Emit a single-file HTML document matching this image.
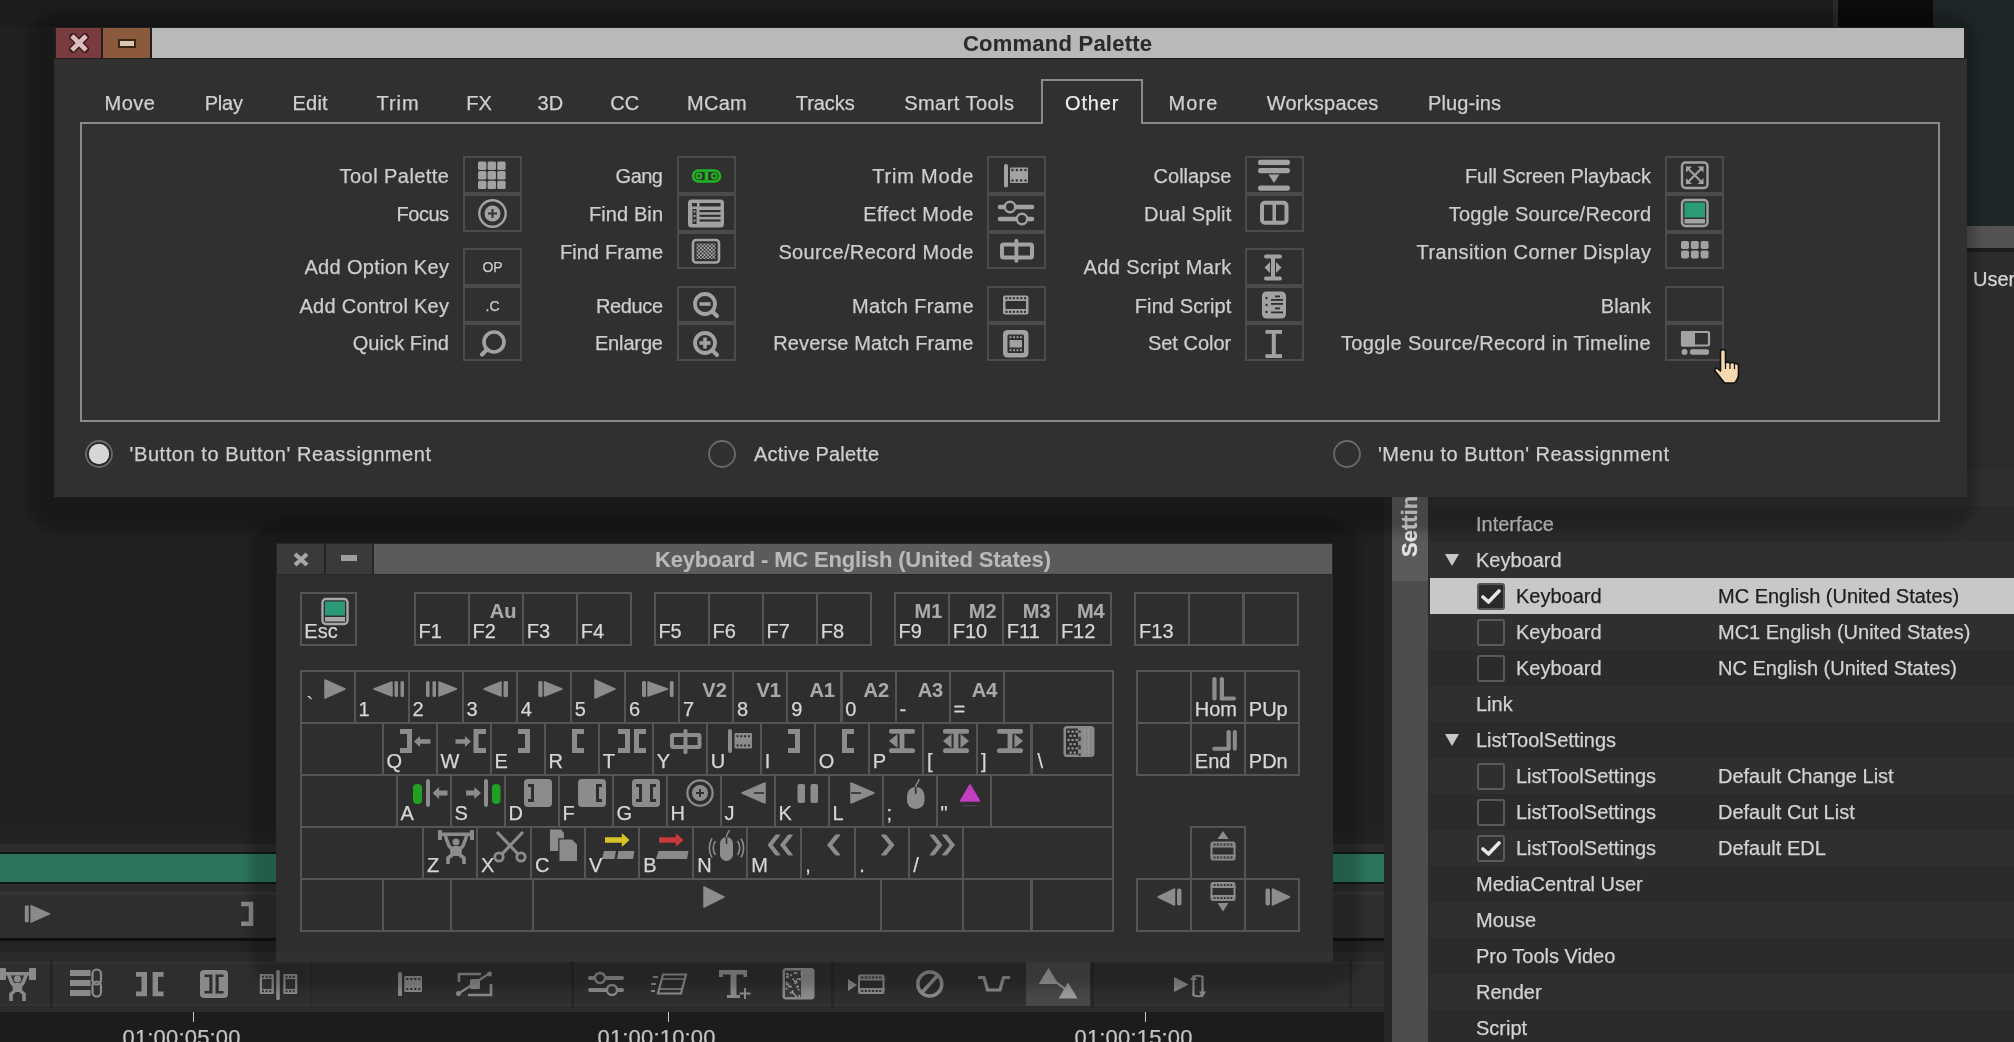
<!DOCTYPE html><html><head><meta charset="utf-8"><style>
html,body{margin:0;padding:0;width:2014px;height:1042px;overflow:hidden;background:#202020;}
.r{position:absolute;display:block}
.t{position:absolute;white-space:nowrap;line-height:1;font-family:"Liberation Sans",sans-serif;-webkit-text-stroke:0.25px currentColor}
#root{position:absolute;left:0;top:0;width:2014px;height:1042px;overflow:hidden;will-change:transform}
</style></head><body><div id="root">
<div class="r" style="left:0px;top:0px;width:2014px;height:1042px;background:#212121;"></div>
<div class="r" style="left:0px;top:0px;width:1833px;height:27px;background:#1c1c1c;"></div>
<div class="r" style="left:1833px;top:0px;width:5px;height:27px;background:#2a2a2a;"></div>
<div class="r" style="left:1838px;top:0px;width:95px;height:27px;background:#0c0c0c;"></div>
<div class="r" style="left:1933px;top:0px;width:81px;height:226px;background:#1f2629;"></div>
<div class="r" style="left:1966px;top:226px;width:48px;height:22px;background:#535353;"></div>
<div class="r" style="left:1966px;top:248px;width:48px;height:4px;background:#1c1c1c;"></div>
<div class="r" style="left:1966px;top:252px;width:48px;height:250px;background:#2c2c2c;"></div>
<div class="t" style="left:1973.00px;top:269.04px;font-size:20px;color:#d6d6d6;">User</div>
<div class="r" style="left:0px;top:830px;width:1384px;height:14px;background:#232323;"></div>
<div class="r" style="left:0px;top:844px;width:1384px;height:8px;background:#2e2c2d;"></div>
<div class="r" style="left:0px;top:851.5px;width:1384px;height:2.5px;background:#0f1a16;"></div>
<div class="r" style="left:0px;top:854px;width:1384px;height:28px;background:#2c745e;"></div>
<div class="r" style="left:0px;top:882px;width:1384px;height:2px;background:#0f1a16;"></div>
<div class="r" style="left:0px;top:884px;width:1384px;height:8px;background:#2e2c2d;"></div>
<div class="r" style="left:0px;top:892px;width:1384px;height:3px;background:#353535;"></div>
<div class="r" style="left:0px;top:895px;width:1384px;height:43px;background:#2e2e2e;"></div>
<div class="r" style="left:0px;top:938px;width:1384px;height:2.5px;background:#0e0e0e;"></div>
<div class="r" style="left:0px;top:940.5px;width:1384px;height:12px;background:#242424;"></div>
<svg class="r" style="left:20px;top:900px;" width="40" height="30" viewBox="0 0 40 30"><rect x="4.8" y="5.6" width="4" height="16.6" rx="1" fill="#8a8a8a"/><path d="M11 5.6 L29.7 13.9 L11 22.2 Z" fill="#8a8a8a" stroke="#8a8a8a" stroke-width="1.2" stroke-linejoin="round"/></svg>
<svg class="r" style="left:236px;top:898px;" width="22" height="32" viewBox="0 0 22 32"><path d="M5.2 6 H15 V25.8 H5.2" fill="none" stroke="#8a8a8a" stroke-width="4.5"/></svg>
<div class="r" style="left:0px;top:952px;width:1384px;height:60px;background:#2b2b2b;"></div>
<div class="r" style="left:0px;top:962px;width:1384px;height:44px;background:#2e2e2e;"></div>
<div class="r" style="left:0px;top:962px;width:1384px;height:1.5px;background:#333333;"></div>
<div class="r" style="left:0px;top:1004px;width:1384px;height:1.5px;background:#333333;"></div>
<div class="r" style="left:50px;top:960px;width:3px;height:48px;background:#262626;"></div>
<div class="r" style="left:571px;top:960px;width:3px;height:48px;background:#262626;"></div>
<div class="r" style="left:831px;top:960px;width:3px;height:48px;background:#262626;"></div>
<div class="r" style="left:1091px;top:960px;width:3px;height:48px;background:#262626;"></div>
<div class="r" style="left:1349px;top:960px;width:3px;height:48px;background:#262626;"></div>
<div class="r" style="left:310px;top:962px;width:2px;height:44px;background:#2a2a2a;"></div>
<div class="r" style="left:1026px;top:962px;width:64px;height:44px;background:#474747;"></div>
<svg class="r" style="left:0;top:0" width="1384" height="1042" viewBox="0 0 1384 1042"><rect x="-2" y="968" width="8" height="12" rx="1" fill="#8a8a8a"/><rect x="29" y="968" width="7" height="12" rx="1" fill="#8a8a8a"/><rect x="3" y="972" width="28" height="3.5" fill="#8a8a8a"/><circle cx="17.5" cy="979" r="3.6" fill="#8a8a8a"/><path d="M8 973 L12 983 L14.5 986 V991 L11 994 V1001 M27 973 L23 983 L20.5 986 V991 L24 994 V1001" fill="none" stroke="#8a8a8a" stroke-width="3.6" stroke-linejoin="round"/><rect x="13" y="983" width="9" height="9" rx="2.5" fill="#8a8a8a"/><rect x="70" y="970" width="20.5" height="6" fill="#8a8a8a"/><rect x="70" y="980" width="20.5" height="6" fill="#8a8a8a"/><rect x="70" y="990" width="20.5" height="6" fill="#8a8a8a"/><rect x="92.5" y="969.5" width="8.5" height="15" rx="4.2" fill="none" stroke="#8a8a8a" stroke-width="2.2"/><rect x="92.5" y="981.5" width="8.5" height="15" rx="4.2" fill="none" stroke="#8a8a8a" stroke-width="2.2"/><path d="M136 972 H147 V996.3 H136 V991.5 H141.5 V976.8 H136 Z" fill="#8a8a8a"/><path d="M163.6 972 H152.6 V996.3 H163.6 V991.5 H158 V976.8 H163.6 Z" fill="#8a8a8a"/><rect x="200" y="970" width="28" height="28" rx="4" fill="#8a8a8a"/><path d="M204.5 974.5 H212.5 V993.5 H204.5 V991 H209.3 V977 H204.5 Z M223.5 974.5 H215.5 V993.5 H223.5 V991 H218.7 V977 H223.5 Z" fill="#2e2e2e"/><rect x="259.8" y="974" width="14" height="20" rx="1" fill="#8a8a8a"/><rect x="262.0" y="979" width="9.6" height="10" fill="#333"/><rect x="262.0" y="975.8" width="2" height="2" fill="#333"/><rect x="262.0" y="990.2" width="2" height="2" fill="#333"/><rect x="265.6" y="975.8" width="2" height="2" fill="#333"/><rect x="265.6" y="990.2" width="2" height="2" fill="#333"/><rect x="269.2" y="975.8" width="2" height="2" fill="#333"/><rect x="269.2" y="990.2" width="2" height="2" fill="#333"/><rect x="283.3" y="974" width="14" height="20" rx="1" fill="#8a8a8a"/><rect x="285.5" y="979" width="9.6" height="10" fill="#333"/><rect x="285.5" y="975.8" width="2" height="2" fill="#333"/><rect x="285.5" y="990.2" width="2" height="2" fill="#333"/><rect x="289.1" y="975.8" width="2" height="2" fill="#333"/><rect x="289.1" y="990.2" width="2" height="2" fill="#333"/><rect x="292.7" y="975.8" width="2" height="2" fill="#333"/><rect x="292.7" y="990.2" width="2" height="2" fill="#333"/><rect x="276.2" y="970" width="3.6" height="30" rx="1.5" fill="#8a8a8a"/><rect x="398" y="972" width="4" height="24" rx="1.5" fill="#8a8a8a"/><rect x="404.3" y="976" width="17.7" height="16" rx="1" fill="#8a8a8a"/><rect x="406.3" y="978" width="2" height="2" fill="#2e2e2e"/><rect x="406.3" y="988" width="2" height="2" fill="#2e2e2e"/><rect x="410.3" y="978" width="2" height="2" fill="#2e2e2e"/><rect x="410.3" y="988" width="2" height="2" fill="#2e2e2e"/><rect x="414.3" y="978" width="2" height="2" fill="#2e2e2e"/><rect x="414.3" y="988" width="2" height="2" fill="#2e2e2e"/><rect x="418.3" y="978" width="2" height="2" fill="#2e2e2e"/><rect x="418.3" y="988" width="2" height="2" fill="#2e2e2e"/><path d="M459 982 V974 H481 M491 984 V995 H468" fill="none" stroke="#8a8a8a" stroke-width="2.6"/><path d="M458 994 L490 973" stroke="#8a8a8a" stroke-width="2.2"/><rect x="470" y="979" width="10" height="10" rx="1.5" fill="#8a8a8a"/><circle cx="458.5" cy="993.5" r="2.5" fill="#8a8a8a"/><circle cx="489.5" cy="974" r="2.5" fill="#8a8a8a"/><path d="M590 978 H622 M590 990 H622" stroke="#8a8a8a" stroke-width="4" stroke-linecap="round"/><circle cx="600" cy="978" r="5" fill="#2e2e2e" stroke="#8a8a8a" stroke-width="2.4"/><circle cx="612" cy="990" r="5" fill="#2e2e2e" stroke="#8a8a8a" stroke-width="2.4"/><path d="M663 974.5 H686 L681 993.5 H658 Z" fill="none" stroke="#8a8a8a" stroke-width="2.2"/><path d="M662 979 H685 M659 989 H682" stroke="#8a8a8a" stroke-width="1.6"/><path d="M653 977 H658 M651 984 H656 M651 991 H655" stroke="#8a8a8a" stroke-width="2"/><path d="M719 970 H747 V977 H743.5 V974.5 H736.5 V995 H740 V998 H727 V995 H730.5 V974.5 H723 V977 H719 Z" fill="#8a8a8a"/><path d="M745 988 V999 M739.5 993.5 H750.5" stroke="#8a8a8a" stroke-width="2"/><rect x="782.5" y="968" width="32" height="31.5" rx="3.5" fill="#8a8a8a"/><rect x="785" y="970.5" width="16" height="26.5" fill="#3a3a3a"/><rect x="790.2" y="974.4" width="1.8" height="1.8" fill="#a0a0a0"/><rect x="795.4" y="972.4" width="1.8" height="1.8" fill="#a0a0a0"/><rect x="793.6" y="980.0" width="1.8" height="1.8" fill="#a0a0a0"/><rect x="785.9" y="983.7" width="1.8" height="1.8" fill="#a0a0a0"/><rect x="785.6" y="981.8" width="1.8" height="1.8" fill="#a0a0a0"/><rect x="786.1" y="972.9" width="1.8" height="1.8" fill="#a0a0a0"/><rect x="791.8" y="992.0" width="1.8" height="1.8" fill="#a0a0a0"/><rect x="787.0" y="976.3" width="1.8" height="1.8" fill="#a0a0a0"/><rect x="795.0" y="995.1" width="1.8" height="1.8" fill="#a0a0a0"/><rect x="794.2" y="980.8" width="1.8" height="1.8" fill="#a0a0a0"/><rect x="800.6" y="971.7" width="1.8" height="1.8" fill="#a0a0a0"/><rect x="798.7" y="978.0" width="1.8" height="1.8" fill="#a0a0a0"/><rect x="787.3" y="973.6" width="1.8" height="1.8" fill="#a0a0a0"/><rect x="789.9" y="991.7" width="1.8" height="1.8" fill="#a0a0a0"/><rect x="787.9" y="985.6" width="1.8" height="1.8" fill="#a0a0a0"/><rect x="795.2" y="980.2" width="1.8" height="1.8" fill="#a0a0a0"/><rect x="793.8" y="972.1" width="1.8" height="1.8" fill="#a0a0a0"/><rect x="786.0" y="975.9" width="1.8" height="1.8" fill="#a0a0a0"/><rect x="795.9" y="981.6" width="1.8" height="1.8" fill="#a0a0a0"/><rect x="790.0" y="985.7" width="1.8" height="1.8" fill="#a0a0a0"/><rect x="792.3" y="978.3" width="1.8" height="1.8" fill="#a0a0a0"/><rect x="797.7" y="988.7" width="1.8" height="1.8" fill="#a0a0a0"/><rect x="788.9" y="985.4" width="1.8" height="1.8" fill="#a0a0a0"/><rect x="793.4" y="993.3" width="1.8" height="1.8" fill="#a0a0a0"/><rect x="796.7" y="978.0" width="1.8" height="1.8" fill="#a0a0a0"/><rect x="800.7" y="973.6" width="1.8" height="1.8" fill="#a0a0a0"/><rect x="791.7" y="990.2" width="1.8" height="1.8" fill="#a0a0a0"/><rect x="787.4" y="983.2" width="1.8" height="1.8" fill="#a0a0a0"/><rect x="785.6" y="987.9" width="1.8" height="1.8" fill="#a0a0a0"/><rect x="797.2" y="985.4" width="1.8" height="1.8" fill="#a0a0a0"/><rect x="799.0" y="978.7" width="1.8" height="1.8" fill="#a0a0a0"/><rect x="796.1" y="986.0" width="1.8" height="1.8" fill="#a0a0a0"/><rect x="794.3" y="982.4" width="1.8" height="1.8" fill="#a0a0a0"/><rect x="798.4" y="995.1" width="1.8" height="1.8" fill="#a0a0a0"/><path d="M848 979 L857 985 L848 991 Z" fill="#8a8a8a"/><rect x="859" y="975.5" width="24.5" height="17.5" rx="1" fill="none" stroke="#8a8a8a" stroke-width="2"/><path d="M858 979.5 H884.5 M858 989 H884.5" stroke="#8a8a8a" stroke-width="2"/><rect x="859.60" y="976.6" width="1.8" height="1.8" fill="#8a8a8a"/><rect x="859.60" y="990.1" width="1.8" height="1.8" fill="#8a8a8a"/><rect x="863.18" y="976.6" width="1.8" height="1.8" fill="#8a8a8a"/><rect x="863.18" y="990.1" width="1.8" height="1.8" fill="#8a8a8a"/><rect x="866.77" y="976.6" width="1.8" height="1.8" fill="#8a8a8a"/><rect x="866.77" y="990.1" width="1.8" height="1.8" fill="#8a8a8a"/><rect x="870.35" y="976.6" width="1.8" height="1.8" fill="#8a8a8a"/><rect x="870.35" y="990.1" width="1.8" height="1.8" fill="#8a8a8a"/><rect x="873.93" y="976.6" width="1.8" height="1.8" fill="#8a8a8a"/><rect x="873.93" y="990.1" width="1.8" height="1.8" fill="#8a8a8a"/><rect x="877.52" y="976.6" width="1.8" height="1.8" fill="#8a8a8a"/><rect x="877.52" y="990.1" width="1.8" height="1.8" fill="#8a8a8a"/><rect x="881.10" y="976.6" width="1.8" height="1.8" fill="#8a8a8a"/><rect x="881.10" y="990.1" width="1.8" height="1.8" fill="#8a8a8a"/><circle cx="929.8" cy="984" r="12" fill="none" stroke="#8a8a8a" stroke-width="3.5"/><path d="M922 992.5 L937.5 975.5" stroke="#8a8a8a" stroke-width="3.5"/><path d="M978 977.5 H984 L987.5 990 H1000 L1003.5 977.5 H1010" fill="none" stroke="#8a8a8a" stroke-width="3.2" stroke-linejoin="round"/><path d="M1048.5 969 L1057.3 983.5 L1039.7 983.5 Z M1068 983.5 L1076.7 998 L1059.6 998 Z" fill="#9a9a9a" stroke="#9a9a9a" stroke-width="1.2" stroke-linejoin="round"/><path d="M1052 979 L1065 989" stroke="#9a9a9a" stroke-width="2"/><path d="M1174 977 L1188.6 984.5 L1174 992 Z" fill="#8a8a8a"/><path d="M1193.5 996 V978 M1202.5 976 V994" stroke="#8a8a8a" stroke-width="2.2"/><path d="M1190 980 L1193.5 974.5 L1197 980 Z M1199 991.5 L1202.5 997.5 L1206 991.5 Z" fill="#8a8a8a"/><path d="M1193.5 978 C1193.5 975 1202.5 975 1202.5 978 M1193.5 994 C1193.5 997 1202.5 997 1202.5 994" fill="none" stroke="#8a8a8a" stroke-width="2"/></svg>
<div class="r" style="left:0px;top:1011.5px;width:1384px;height:31px;background:#1c1c1c;"></div>
<div class="r" style="left:192.5px;top:1012px;width:1.8px;height:9.5px;background:#c8c8c8;"></div>
<div class="t" style="left:122.50px;top:1026.84px;font-size:22px;color:#c2c2c2;letter-spacing:0.178px;">01:00:05:00</div>
<div class="r" style="left:667.5px;top:1012px;width:1.8px;height:9.5px;background:#c8c8c8;"></div>
<div class="t" style="left:597.50px;top:1026.84px;font-size:22px;color:#c2c2c2;letter-spacing:0.178px;">01:00:10:00</div>
<div class="r" style="left:1144.5px;top:1012px;width:1.8px;height:9.5px;background:#c8c8c8;"></div>
<div class="t" style="left:1074.50px;top:1026.84px;font-size:22px;color:#c2c2c2;letter-spacing:0.178px;">01:00:15:00</div>
<div class="r" style="left:1384px;top:497px;width:8px;height:545px;background:#262626;"></div>
<div class="r" style="left:1392px;top:490px;width:36px;height:552px;background:#4d4d4d;"></div>
<div class="r" style="left:1392px;top:490px;width:36px;height:91px;background:#5a5a5a;"></div>
<div class="t" style="left:1392px;top:497px;width:36px;height:62px;overflow:hidden"><div style="position:absolute;left:0px;top:0px;width:62px;height:36px;transform-origin:0 0;transform:translate(0px,62px) rotate(-90deg);font:bold 22px 'Liberation Sans';color:#e4e4e4;line-height:36px;text-indent:2px">Settings</div></div>
<div class="r" style="left:1428px;top:490px;width:586px;height:552px;background:#2d2d2d;"></div>
<div class="r" style="left:1428px;top:470px;width:586px;height:36px;background:#2f2f2f;"></div>
<div class="r" style="left:1430px;top:506px;width:584px;height:36px;background:#2b2b2b;"></div>
<div class="t" style="left:1476.00px;top:514.04px;font-size:20px;color:#d2d2d2;">Interface</div>
<div class="r" style="left:1430px;top:542px;width:584px;height:36px;background:#2f2f2f;"></div>
<div class="t" style="left:1476.00px;top:550.04px;font-size:20px;color:#d2d2d2;">Keyboard</div>
<svg class="r" style="left:1444px;top:553px;" width="16" height="14" viewBox="0 0 16 14"><path d="M1 1 L15 1 L8 13 Z" fill="#c8c8c8"/></svg>
<div class="r" style="left:1430px;top:578px;width:584px;height:36px;background:#c8c8c8;"></div>
<div class="r" style="left:1477px;top:583px;width:28px;height:27px;box-sizing:border-box;border:2px solid #555555;background:#2a2a2a;border-radius:3px;"></div>
<svg class="r" style="left:1481px;top:588px;" width="20" height="17" viewBox="0 0 20 17"><path d="M2 9 L7.5 14 L18 3" fill="none" stroke="#e6e6e6" stroke-width="3.6" stroke-linejoin="round" stroke-linecap="round"/></svg>
<div class="t" style="left:1516.00px;top:586.04px;font-size:20px;color:#1e1e1e;">Keyboard</div>
<div class="t" style="left:1718.00px;top:586.04px;font-size:20px;color:#1e1e1e;">MC English (United States)</div>
<div class="r" style="left:1430px;top:614px;width:584px;height:36px;background:#2f2f2f;"></div>
<div class="r" style="left:1477px;top:619px;width:28px;height:27px;box-sizing:border-box;border:2px solid #5a5a5a;border-radius:3px;"></div>
<div class="t" style="left:1516.00px;top:622.04px;font-size:20px;color:#d2d2d2;">Keyboard</div>
<div class="t" style="left:1718.00px;top:622.04px;font-size:20px;color:#d2d2d2;">MC1 English (United States)</div>
<div class="r" style="left:1430px;top:650px;width:584px;height:36px;background:#2b2b2b;"></div>
<div class="r" style="left:1477px;top:655px;width:28px;height:27px;box-sizing:border-box;border:2px solid #5a5a5a;border-radius:3px;"></div>
<div class="t" style="left:1516.00px;top:658.04px;font-size:20px;color:#d2d2d2;">Keyboard</div>
<div class="t" style="left:1718.00px;top:658.04px;font-size:20px;color:#d2d2d2;">NC English (United States)</div>
<div class="r" style="left:1430px;top:686px;width:584px;height:36px;background:#2f2f2f;"></div>
<div class="t" style="left:1476.00px;top:694.04px;font-size:20px;color:#d2d2d2;">Link</div>
<div class="r" style="left:1430px;top:722px;width:584px;height:36px;background:#2b2b2b;"></div>
<div class="t" style="left:1476.00px;top:730.04px;font-size:20px;color:#d2d2d2;">ListToolSettings</div>
<svg class="r" style="left:1444px;top:733px;" width="16" height="14" viewBox="0 0 16 14"><path d="M1 1 L15 1 L8 13 Z" fill="#c8c8c8"/></svg>
<div class="r" style="left:1430px;top:758px;width:584px;height:36px;background:#2f2f2f;"></div>
<div class="r" style="left:1477px;top:763px;width:28px;height:27px;box-sizing:border-box;border:2px solid #5a5a5a;border-radius:3px;"></div>
<div class="t" style="left:1516.00px;top:766.04px;font-size:20px;color:#d2d2d2;">ListToolSettings</div>
<div class="t" style="left:1718.00px;top:766.04px;font-size:20px;color:#d2d2d2;">Default Change List</div>
<div class="r" style="left:1430px;top:794px;width:584px;height:36px;background:#2b2b2b;"></div>
<div class="r" style="left:1477px;top:799px;width:28px;height:27px;box-sizing:border-box;border:2px solid #5a5a5a;border-radius:3px;"></div>
<div class="t" style="left:1516.00px;top:802.04px;font-size:20px;color:#d2d2d2;">ListToolSettings</div>
<div class="t" style="left:1718.00px;top:802.04px;font-size:20px;color:#d2d2d2;">Default Cut List</div>
<div class="r" style="left:1430px;top:830px;width:584px;height:36px;background:#2f2f2f;"></div>
<div class="r" style="left:1477px;top:835px;width:28px;height:27px;box-sizing:border-box;border:2px solid #5a5a5a;border-radius:3px;"></div>
<svg class="r" style="left:1481px;top:840px;" width="20" height="17" viewBox="0 0 20 17"><path d="M2 9 L7.5 14 L18 3" fill="none" stroke="#e6e6e6" stroke-width="3.6" stroke-linejoin="round" stroke-linecap="round"/></svg>
<div class="t" style="left:1516.00px;top:838.04px;font-size:20px;color:#d2d2d2;">ListToolSettings</div>
<div class="t" style="left:1718.00px;top:838.04px;font-size:20px;color:#d2d2d2;">Default EDL</div>
<div class="r" style="left:1430px;top:866px;width:584px;height:36px;background:#2b2b2b;"></div>
<div class="t" style="left:1476.00px;top:874.04px;font-size:20px;color:#d2d2d2;">MediaCentral User</div>
<div class="r" style="left:1430px;top:902px;width:584px;height:36px;background:#2f2f2f;"></div>
<div class="t" style="left:1476.00px;top:910.04px;font-size:20px;color:#d2d2d2;">Mouse</div>
<div class="r" style="left:1430px;top:938px;width:584px;height:36px;background:#2b2b2b;"></div>
<div class="t" style="left:1476.00px;top:946.04px;font-size:20px;color:#d2d2d2;">Pro Tools Video</div>
<div class="r" style="left:1430px;top:974px;width:584px;height:36px;background:#2f2f2f;"></div>
<div class="t" style="left:1476.00px;top:982.04px;font-size:20px;color:#d2d2d2;">Render</div>
<div class="r" style="left:1430px;top:1010px;width:584px;height:36px;background:#2b2b2b;"></div>
<div class="t" style="left:1476.00px;top:1018.04px;font-size:20px;color:#d2d2d2;">Script</div>
<div class="r" style="left:26px;top:12px;width:1950px;height:520px;background:rgba(0,0,0,0.22);border-radius:34px;filter:blur(5px);"></div>
<div class="r" style="left:54px;top:27px;width:1913px;height:470px;background:#303030;"></div>
<div class="r" style="left:54px;top:27px;width:1913px;height:32px;background:#1f1f1f;"></div>
<div class="r" style="left:56px;top:28px;width:45px;height:30px;background:#7a3b3e;"></div>
<div class="r" style="left:103px;top:28px;width:47px;height:30px;background:#8b5a3c;"></div>
<div class="r" style="left:152px;top:28px;width:1812px;height:30px;background:#b9b9b9;"></div>
<svg class="r" style="left:69px;top:33px;" width="20" height="20" viewBox="0 0 20 20"><path d="M4 4 L16 16 M16 4 L4 16" stroke="#3a1c1e" stroke-width="7.5" stroke-linecap="square"/><path d="M4.5 4.5 L15.5 15.5 M15.5 4.5 L4.5 15.5" stroke="#dcbcbc" stroke-width="4.6" stroke-linecap="square"/></svg>
<svg class="r" style="left:117px;top:38px;" width="20" height="11" viewBox="0 0 20 11"><rect x="1" y="1" width="18" height="9" fill="#3a2414"/><rect x="3" y="3" width="14" height="5" fill="#dcc6ae"/></svg>
<div class="t" style="left:963.00px;top:32.84px;font-size:22px;color:#2b2b2b;font-weight:bold;-webkit-text-stroke:0.1px currentColor;letter-spacing:0.227px;">Command Palette</div>
<div class="r" style="left:80px;top:122px;width:1860px;height:300px;box-sizing:border-box;border:2px solid #8a8a8a;"></div>
<div class="r" style="left:1041px;top:79px;width:102px;height:2px;background:#8a8a8a;"></div>
<div class="r" style="left:1041px;top:79px;width:2px;height:45px;background:#8a8a8a;"></div>
<div class="r" style="left:1141px;top:79px;width:2px;height:45px;background:#8a8a8a;"></div>
<div class="r" style="left:1043px;top:122px;width:98px;height:2px;background:#303030;"></div>
<div class="t" style="left:104.50px;top:92.54px;font-size:20px;color:#d0d0d0;letter-spacing:0.498px;">Move</div>
<div class="t" style="left:204.80px;top:92.54px;font-size:20px;color:#d0d0d0;letter-spacing:-0.269px;">Play</div>
<div class="t" style="left:292.60px;top:92.54px;font-size:20px;color:#d0d0d0;letter-spacing:0.179px;">Edit</div>
<div class="t" style="left:376.60px;top:92.54px;font-size:20px;color:#d0d0d0;letter-spacing:0.921px;">Trim</div>
<div class="t" style="left:466.22px;top:92.54px;font-size:20px;color:#d0d0d0;">FX</div>
<div class="t" style="left:537.62px;top:92.54px;font-size:20px;color:#d0d0d0;">3D</div>
<div class="t" style="left:610.31px;top:92.54px;font-size:20px;color:#d0d0d0;">CC</div>
<div class="t" style="left:687.00px;top:92.54px;font-size:20px;color:#d0d0d0;letter-spacing:0.271px;">MCam</div>
<div class="t" style="left:795.70px;top:92.54px;font-size:20px;color:#d0d0d0;letter-spacing:-0.032px;">Tracks</div>
<div class="t" style="left:904.20px;top:92.54px;font-size:20px;color:#d0d0d0;letter-spacing:0.461px;">Smart Tools</div>
<div class="t" style="left:1065.00px;top:92.54px;font-size:20px;color:#ededed;letter-spacing:0.870px;">Other</div>
<div class="t" style="left:1168.40px;top:92.54px;font-size:20px;color:#d0d0d0;letter-spacing:1.145px;">More</div>
<div class="t" style="left:1266.70px;top:92.54px;font-size:20px;color:#d0d0d0;letter-spacing:0.215px;">Workspaces</div>
<div class="t" style="left:1428.00px;top:92.54px;font-size:20px;color:#d0d0d0;letter-spacing:0.106px;">Plug-ins</div>
<div class="r" style="left:463px;top:156.3px;width:59px;height:37.7px;box-sizing:border-box;border:2px solid #4b4b4b;"></div>
<div class="t" style="left:339.60px;top:165.54px;font-size:20px;color:#cdcdcd;letter-spacing:0.444px;">Tool Palette</div>
<svg class="r" style="left:463px;top:156.5px;" width="59" height="37" viewBox="0 0 59 37"><rect x="15.0" y="4.5" width="8.4" height="8.4" rx="1.5" fill="#a2a2a2"/><rect x="24.6" y="4.5" width="8.4" height="8.4" rx="1.5" fill="#a2a2a2"/><rect x="34.2" y="4.5" width="8.4" height="8.4" rx="1.5" fill="#a2a2a2"/><rect x="15.0" y="14.1" width="8.4" height="8.4" rx="1.5" fill="#a2a2a2"/><rect x="24.6" y="14.1" width="8.4" height="8.4" rx="1.5" fill="#a2a2a2"/><rect x="34.2" y="14.1" width="8.4" height="8.4" rx="1.5" fill="#a2a2a2"/><rect x="15.0" y="23.7" width="8.4" height="8.4" rx="1.5" fill="#a2a2a2"/><rect x="24.6" y="23.7" width="8.4" height="8.4" rx="1.5" fill="#a2a2a2"/><rect x="34.2" y="23.7" width="8.4" height="8.4" rx="1.5" fill="#a2a2a2"/></svg>
<div class="r" style="left:463px;top:193.9px;width:59px;height:37.7px;box-sizing:border-box;border:2px solid #4b4b4b;"></div>
<div class="t" style="left:396.60px;top:203.74px;font-size:20px;color:#cdcdcd;letter-spacing:-0.516px;">Focus</div>
<svg class="r" style="left:463px;top:194.8px;" width="59" height="37" viewBox="0 0 59 37"><circle cx="29.5" cy="18.5" r="13.2" fill="none" stroke="#a2a2a2" stroke-width="2.4"/><circle cx="29.5" cy="18.5" r="8" fill="#a2a2a2"/><path d="M25 18.5 H34 M29.5 14 V23" stroke="#2f2f2f" stroke-width="2"/></svg>
<div class="r" style="left:463px;top:248.2px;width:59px;height:37.7px;box-sizing:border-box;border:2px solid #4b4b4b;"></div>
<div class="t" style="left:304.40px;top:257.24px;font-size:20px;color:#cdcdcd;letter-spacing:0.347px;">Add Option Key</div>
<div class="t" style="left:482.39px;top:260.43px;font-size:14px;color:#c8c8c8;">OP</div>
<div class="r" style="left:463px;top:285.8px;width:59px;height:37.7px;box-sizing:border-box;border:2px solid #4b4b4b;"></div>
<div class="t" style="left:299.50px;top:295.64px;font-size:20px;color:#cdcdcd;letter-spacing:0.276px;">Add Control Key</div>
<div class="t" style="left:485.50px;top:299.13px;font-size:14px;color:#c8c8c8;">.C</div>
<div class="r" style="left:463px;top:323.4px;width:59px;height:37.7px;box-sizing:border-box;border:2px solid #4b4b4b;"></div>
<div class="t" style="left:352.70px;top:333.24px;font-size:20px;color:#cdcdcd;letter-spacing:0.079px;">Quick Find</div>
<svg class="r" style="left:463px;top:325.5px;" width="59" height="37" viewBox="0 0 59 37"><circle cx="31" cy="16" r="10" fill="none" stroke="#a2a2a2" stroke-width="3.6"/><path d="M24 23.5 L19 28.5" stroke="#a2a2a2" stroke-width="4.2" stroke-linecap="round"/></svg>
<div class="r" style="left:677px;top:156.3px;width:59px;height:37.7px;box-sizing:border-box;border:2px solid #4b4b4b;"></div>
<div class="t" style="left:615.60px;top:165.54px;font-size:20px;color:#cdcdcd;letter-spacing:-0.509px;">Gang</div>
<svg class="r" style="left:677px;top:156.5px;" width="59" height="37" viewBox="0 0 59 37"><rect x="16" y="13.5" width="27" height="11" rx="5.5" fill="none" stroke="#21b521" stroke-width="2.6"/><circle cx="21.8" cy="19" r="2.4" fill="none" stroke="#21b521" stroke-width="2"/><circle cx="37.2" cy="19" r="2.4" fill="none" stroke="#21b521" stroke-width="2"/><rect x="27.8" y="14.5" width="3.4" height="9" fill="#21b521"/></svg>
<div class="r" style="left:677px;top:193.9px;width:59px;height:37.7px;box-sizing:border-box;border:2px solid #4b4b4b;"></div>
<div class="t" style="left:589.00px;top:203.74px;font-size:20px;color:#cdcdcd;letter-spacing:0.090px;">Find Bin</div>
<svg class="r" style="left:677px;top:194.8px;" width="59" height="37" viewBox="0 0 59 37"><rect x="11" y="4.5" width="36" height="28" rx="3.5" fill="#a2a2a2"/><rect x="15" y="8" width="5" height="3.5" fill="#2f2f2f"/><rect x="22.5" y="8" width="21" height="3.5" fill="#2f2f2f"/><rect x="15.5" y="14" width="4" height="15" fill="#2f2f2f"/><rect x="16.5" y="15.5" width="2" height="2" fill="#a2a2a2"/><rect x="16.5" y="20" width="2" height="2" fill="#a2a2a2"/><rect x="16.5" y="24.5" width="2" height="2" fill="#a2a2a2"/><rect x="22.5" y="15" width="21" height="2.2" fill="#2f2f2f"/><rect x="22.5" y="19.7" width="21" height="2.2" fill="#2f2f2f"/><rect x="22.5" y="24.4" width="21" height="2.2" fill="#2f2f2f"/></svg>
<div class="r" style="left:677px;top:231.5px;width:59px;height:37.7px;box-sizing:border-box;border:2px solid #4b4b4b;"></div>
<div class="t" style="left:560.00px;top:241.74px;font-size:20px;color:#cdcdcd;letter-spacing:0.084px;">Find Frame</div>
<svg class="r" style="left:677px;top:233.0px;" width="59" height="37" viewBox="0 0 59 37"><rect x="16" y="7" width="26" height="22.5" rx="3" fill="none" stroke="#a2a2a2" stroke-width="2.6"/><pattern id="chk" x="19.5" y="10.5" width="3.6" height="3.6" patternUnits="userSpaceOnUse"><rect width="3.6" height="3.6" fill="#3a3a3a"/><rect width="1.8" height="1.8" fill="#a8a8a8"/><rect x="1.8" y="1.8" width="1.8" height="1.8" fill="#a8a8a8"/></pattern><rect x="19.5" y="10.5" width="19" height="15.5" fill="url(#chk)"/></svg>
<div class="r" style="left:677px;top:285.8px;width:59px;height:37.7px;box-sizing:border-box;border:2px solid #4b4b4b;"></div>
<div class="t" style="left:596.00px;top:295.64px;font-size:20px;color:#cdcdcd;letter-spacing:-0.387px;">Reduce</div>
<svg class="r" style="left:677px;top:287.0px;" width="59" height="37" viewBox="0 0 59 37"><circle cx="28" cy="17" r="10" fill="none" stroke="#a2a2a2" stroke-width="3.8"/><path d="M35.5 24.5 L40 29" stroke="#a2a2a2" stroke-width="4" stroke-linecap="round"/><path d="M22.5 17 H33.5" stroke="#a2a2a2" stroke-width="3.6"/></svg>
<div class="r" style="left:677px;top:323.4px;width:59px;height:37.7px;box-sizing:border-box;border:2px solid #4b4b4b;"></div>
<div class="t" style="left:594.90px;top:333.24px;font-size:20px;color:#cdcdcd;letter-spacing:-0.139px;">Enlarge</div>
<svg class="r" style="left:677px;top:325.5px;" width="59" height="37" viewBox="0 0 59 37"><circle cx="28" cy="17" r="10" fill="none" stroke="#a2a2a2" stroke-width="3.8"/><path d="M35.5 24.5 L40 29" stroke="#a2a2a2" stroke-width="4" stroke-linecap="round"/><path d="M22.5 17 H33.5" stroke="#a2a2a2" stroke-width="3.6"/><path d="M28 11.5 V22.5" stroke="#a2a2a2" stroke-width="3.6"/></svg>
<div class="r" style="left:987px;top:156.3px;width:59px;height:37.7px;box-sizing:border-box;border:2px solid #4b4b4b;"></div>
<div class="t" style="left:872.20px;top:165.54px;font-size:20px;color:#cdcdcd;letter-spacing:0.809px;">Trim Mode</div>
<svg class="r" style="left:987px;top:156.5px;" width="59" height="37" viewBox="0 0 59 37"><rect x="17" y="7" width="4" height="23.5" rx="2" fill="#a2a2a2"/><rect x="23" y="10.5" width="18" height="15.5" rx="1" fill="#a2a2a2"/><rect x="24.40" y="11.90" width="2.2" height="2.2" fill="#2f2f2f"/><rect x="28.73" y="11.90" width="2.2" height="2.2" fill="#2f2f2f"/><rect x="33.07" y="11.90" width="2.2" height="2.2" fill="#2f2f2f"/><rect x="37.40" y="11.90" width="2.2" height="2.2" fill="#2f2f2f"/><rect x="24.40" y="22.40" width="2.2" height="2.2" fill="#2f2f2f"/><rect x="28.73" y="22.40" width="2.2" height="2.2" fill="#2f2f2f"/><rect x="33.07" y="22.40" width="2.2" height="2.2" fill="#2f2f2f"/><rect x="37.40" y="22.40" width="2.2" height="2.2" fill="#2f2f2f"/></svg>
<div class="r" style="left:987px;top:193.9px;width:59px;height:37.7px;box-sizing:border-box;border:2px solid #4b4b4b;"></div>
<div class="t" style="left:863.20px;top:203.74px;font-size:20px;color:#cdcdcd;letter-spacing:0.394px;">Effect Mode</div>
<svg class="r" style="left:987px;top:194.8px;" width="59" height="37" viewBox="0 0 59 37"><path d="M13 12 H45 M13 24 H45" stroke="#a2a2a2" stroke-width="4.5" stroke-linecap="round"/><circle cx="23" cy="12" r="5.2" fill="#2f2f2f" stroke="#a2a2a2" stroke-width="2.4"/><circle cx="35" cy="24" r="5.2" fill="#2f2f2f" stroke="#a2a2a2" stroke-width="2.4"/></svg>
<div class="r" style="left:987px;top:231.5px;width:59px;height:37.7px;box-sizing:border-box;border:2px solid #4b4b4b;"></div>
<div class="t" style="left:778.40px;top:241.74px;font-size:20px;color:#cdcdcd;letter-spacing:0.360px;">Source/Record Mode</div>
<svg class="r" style="left:987px;top:233.0px;" width="59" height="37" viewBox="0 0 59 37"><rect x="15" y="11.5" width="30" height="13" rx="1.5" fill="none" stroke="#a2a2a2" stroke-width="4"/><rect x="27.5" y="6" width="3.8" height="23.5" rx="1.5" fill="#a2a2a2"/></svg>
<div class="r" style="left:987px;top:285.8px;width:59px;height:37.7px;box-sizing:border-box;border:2px solid #4b4b4b;"></div>
<div class="t" style="left:852.00px;top:295.64px;font-size:20px;color:#cdcdcd;letter-spacing:0.370px;">Match Frame</div>
<svg class="r" style="left:987px;top:287.0px;" width="59" height="37" viewBox="0 0 59 37"><rect x="16" y="8.5" width="25.5" height="19" rx="2" fill="#a2a2a2"/><rect x="18.5" y="14" width="20.5" height="8" fill="#2f2f2f"/><rect x="18.45" y="10.15" width="2.1" height="2.1" fill="#2f2f2f"/><rect x="22.15" y="10.15" width="2.1" height="2.1" fill="#2f2f2f"/><rect x="25.85" y="10.15" width="2.1" height="2.1" fill="#2f2f2f"/><rect x="29.55" y="10.15" width="2.1" height="2.1" fill="#2f2f2f"/><rect x="33.25" y="10.15" width="2.1" height="2.1" fill="#2f2f2f"/><rect x="36.95" y="10.15" width="2.1" height="2.1" fill="#2f2f2f"/><rect x="18.45" y="23.75" width="2.1" height="2.1" fill="#2f2f2f"/><rect x="22.15" y="23.75" width="2.1" height="2.1" fill="#2f2f2f"/><rect x="25.85" y="23.75" width="2.1" height="2.1" fill="#2f2f2f"/><rect x="29.55" y="23.75" width="2.1" height="2.1" fill="#2f2f2f"/><rect x="33.25" y="23.75" width="2.1" height="2.1" fill="#2f2f2f"/><rect x="36.95" y="23.75" width="2.1" height="2.1" fill="#2f2f2f"/></svg>
<div class="r" style="left:987px;top:323.4px;width:59px;height:37.7px;box-sizing:border-box;border:2px solid #4b4b4b;"></div>
<div class="t" style="left:773.20px;top:333.24px;font-size:20px;color:#cdcdcd;letter-spacing:0.137px;">Reverse Match Frame</div>
<svg class="r" style="left:987px;top:325.5px;" width="59" height="37" viewBox="0 0 59 37"><rect x="16" y="4" width="25.5" height="27.5" rx="4.5" fill="#a2a2a2"/><rect x="20.5" y="8.5" width="16.5" height="18.5" rx="1.5" fill="#2f2f2f"/><rect x="22.5" y="14" width="12.5" height="7.5" fill="#a2a2a2"/><rect x="22.55" y="10.25" width="1.9" height="1.9" fill="#a2a2a2"/><rect x="26.05" y="10.25" width="1.9" height="1.9" fill="#a2a2a2"/><rect x="29.55" y="10.25" width="1.9" height="1.9" fill="#a2a2a2"/><rect x="33.05" y="10.25" width="1.9" height="1.9" fill="#a2a2a2"/><rect x="22.55" y="23.25" width="1.9" height="1.9" fill="#a2a2a2"/><rect x="26.05" y="23.25" width="1.9" height="1.9" fill="#a2a2a2"/><rect x="29.55" y="23.25" width="1.9" height="1.9" fill="#a2a2a2"/><rect x="33.05" y="23.25" width="1.9" height="1.9" fill="#a2a2a2"/></svg>
<div class="r" style="left:1245px;top:156.3px;width:59px;height:37.7px;box-sizing:border-box;border:2px solid #4b4b4b;"></div>
<div class="t" style="left:1153.60px;top:165.54px;font-size:20px;color:#cdcdcd;letter-spacing:-0.017px;">Collapse</div>
<svg class="r" style="left:1245px;top:156.5px;" width="59" height="37" viewBox="0 0 59 37"><rect x="13" y="2.8" width="32" height="5.2" rx="2.6" fill="#a2a2a2"/><rect x="13" y="11" width="32" height="5.2" rx="2.6" fill="#a2a2a2"/><path d="M23.5 17.5 H34.5 L29 26 Z" fill="#a2a2a2"/><rect x="13" y="28.5" width="32" height="5.2" rx="2.6" fill="#a2a2a2"/></svg>
<div class="r" style="left:1245px;top:193.9px;width:59px;height:37.7px;box-sizing:border-box;border:2px solid #4b4b4b;"></div>
<div class="t" style="left:1144.10px;top:203.74px;font-size:20px;color:#cdcdcd;letter-spacing:0.178px;">Dual Split</div>
<svg class="r" style="left:1245px;top:194.8px;" width="59" height="37" viewBox="0 0 59 37"><rect x="17" y="7.8" width="24.5" height="20" rx="3" fill="none" stroke="#a2a2a2" stroke-width="4"/><rect x="27.5" y="7" width="3.5" height="21" fill="#a2a2a2"/></svg>
<div class="r" style="left:1245px;top:248.2px;width:59px;height:37.7px;box-sizing:border-box;border:2px solid #4b4b4b;"></div>
<div class="t" style="left:1083.50px;top:257.24px;font-size:20px;color:#cdcdcd;letter-spacing:0.395px;">Add Script Mark</div>
<svg class="r" style="left:1245px;top:248.3px;" width="59" height="37" viewBox="0 0 59 37"><rect x="19" y="6.5" width="18" height="4" rx="2" fill="#a2a2a2"/><rect x="19" y="28.5" width="18" height="4" rx="2" fill="#a2a2a2"/><rect x="26" y="9" width="4" height="21" fill="#a2a2a2"/><path d="M25 14 L19.5 19.5 L25 25 Z M31 14 L36.5 19.5 L31 25 Z" fill="#a2a2a2"/></svg>
<div class="r" style="left:1245px;top:285.8px;width:59px;height:37.7px;box-sizing:border-box;border:2px solid #4b4b4b;"></div>
<div class="t" style="left:1134.80px;top:295.64px;font-size:20px;color:#cdcdcd;letter-spacing:0.091px;">Find Script</div>
<svg class="r" style="left:1245px;top:287.0px;" width="59" height="37" viewBox="0 0 59 37"><rect x="17" y="4.5" width="24" height="27" rx="4.5" fill="#a2a2a2"/><circle cx="21.5" cy="11" r="1.2" fill="#2f2f2f"/><circle cx="21.5" cy="18" r="1.2" fill="#2f2f2f"/><circle cx="21.5" cy="25" r="1.2" fill="#2f2f2f"/><rect x="30" y="8.5" width="5" height="1.8" fill="#2f2f2f"/><rect x="26" y="12" width="12" height="1.8" fill="#2f2f2f"/><rect x="26" y="16" width="12" height="1.8" fill="#2f2f2f"/><rect x="30" y="20.5" width="5" height="1.8" fill="#2f2f2f"/><rect x="26" y="24.5" width="12" height="1.8" fill="#2f2f2f"/></svg>
<div class="r" style="left:1245px;top:323.4px;width:59px;height:37.7px;box-sizing:border-box;border:2px solid #4b4b4b;"></div>
<div class="t" style="left:1147.90px;top:333.24px;font-size:20px;color:#cdcdcd;">Set Color</div>
<svg class="r" style="left:1245px;top:325.5px;" width="59" height="37" viewBox="0 0 59 37"><rect x="20.5" y="4" width="16.5" height="3.8" fill="#a2a2a2"/><rect x="20.5" y="28.2" width="16.5" height="3.8" fill="#a2a2a2"/><rect x="26.8" y="6" width="4" height="24" fill="#a2a2a2"/></svg>
<div class="r" style="left:1664.5px;top:156.3px;width:59px;height:37.7px;box-sizing:border-box;border:2px solid #4b4b4b;"></div>
<div class="t" style="left:1465.00px;top:165.54px;font-size:20px;color:#cdcdcd;letter-spacing:-0.098px;">Full Screen Playback</div>
<svg class="r" style="left:1664.5px;top:156.5px;" width="59" height="37" viewBox="0 0 59 37"><rect x="17" y="5.5" width="25.5" height="25.5" rx="3.5" fill="none" stroke="#a2a2a2" stroke-width="2.4"/><path d="M21.5 10 L38 26.5 M38 10 L21.5 26.5" stroke="#a2a2a2" stroke-width="2"/><path d="M21 9.5 L27 9.5 L21 15.5 Z M38.5 9.5 L32.5 9.5 L38.5 15.5 Z M21 27 L27 27 L21 21 Z M38.5 27 L32.5 27 L38.5 21 Z" fill="#a2a2a2"/></svg>
<div class="r" style="left:1664.5px;top:193.9px;width:59px;height:37.7px;box-sizing:border-box;border:2px solid #4b4b4b;"></div>
<div class="t" style="left:1448.80px;top:203.74px;font-size:20px;color:#cdcdcd;letter-spacing:0.227px;">Toggle Source/Record</div>
<svg class="r" style="left:1664.5px;top:194.8px;" width="59" height="37" viewBox="0 0 59 37"><rect x="17" y="5" width="25.5" height="26" rx="3.5" fill="none" stroke="#a2a2a2" stroke-width="2.4"/><rect x="19.5" y="7.5" width="20.5" height="15" fill="#2a9c78"/><rect x="19.5" y="24" width="20.5" height="4.5" fill="#a2a2a2"/></svg>
<div class="r" style="left:1664.5px;top:231.5px;width:59px;height:37.7px;box-sizing:border-box;border:2px solid #4b4b4b;"></div>
<div class="t" style="left:1416.60px;top:241.74px;font-size:20px;color:#cdcdcd;letter-spacing:0.396px;">Transition Corner Display</div>
<svg class="r" style="left:1664.5px;top:233.0px;" width="59" height="37" viewBox="0 0 59 37"><rect x="16.0" y="8.0" width="8" height="8" rx="1.8" fill="#a2a2a2"/><rect x="25.8" y="8.0" width="8" height="8" rx="1.8" fill="#a2a2a2"/><rect x="35.6" y="8.0" width="8" height="8" rx="1.8" fill="#a2a2a2"/><rect x="16.0" y="17.4" width="8" height="8" rx="1.8" fill="#a2a2a2"/><rect x="25.8" y="17.4" width="8" height="8" rx="1.8" fill="#a2a2a2"/><rect x="35.6" y="17.4" width="8" height="8" rx="1.8" fill="#a2a2a2"/></svg>
<div class="r" style="left:1664.5px;top:285.8px;width:59px;height:37.7px;box-sizing:border-box;border:2px solid #4b4b4b;"></div>
<div class="t" style="left:1600.80px;top:295.64px;font-size:20px;color:#cdcdcd;letter-spacing:0.043px;">Blank</div>
<div class="r" style="left:1664.5px;top:323.4px;width:59px;height:37.7px;box-sizing:border-box;border:2px solid #4b4b4b;"></div>
<div class="t" style="left:1341.00px;top:333.24px;font-size:20px;color:#cdcdcd;letter-spacing:0.342px;">Toggle Source/Record in Timeline</div>
<svg class="r" style="left:1664.5px;top:325.5px;" width="59" height="37" viewBox="0 0 59 37"><rect x="17" y="6" width="27" height="13.5" rx="1" fill="none" stroke="#a2a2a2" stroke-width="2.2"/><rect x="16" y="5" width="14" height="15.5" rx="1" fill="#a2a2a2"/><circle cx="19.5" cy="26" r="3" fill="#a2a2a2"/><rect x="25" y="23.2" width="19" height="5.6" rx="2" fill="#a2a2a2"/></svg>
<svg class="r" style="left:1711px;top:347px;" width="36" height="40" viewBox="0 0 36 40"><path d="M12 2.5 C13.8 2.5 14.5 3.5 14.5 5 V16 C15.5 14.8 18 14.8 19 16.3 C20 15.2 22.5 15.2 23.5 17 C24.5 16.2 27 16.4 27.5 18.5 V27 C27.5 31 25.5 34 23.5 36 H13.5 C11 33 6.5 27 4.5 24.5 C3 22.5 4.5 20.5 6.5 21.5 L9.5 24 V5 C9.5 3.5 10.5 2.5 12 2.5 Z" fill="#f6d9b0" stroke="#111" stroke-width="1.6" stroke-linejoin="round"/><path d="M14.5 16 V22 M19 16.3 V22 M23.5 17 V22" stroke="#111" stroke-width="1.2"/></svg>
<svg class="r" style="left:85px;top:439.5px;" width="28" height="28" viewBox="0 0 28 28"><circle cx="14" cy="14" r="13" fill="#282828" stroke="#6a6a6a" stroke-width="1.8"/><circle cx="14" cy="14" r="10.2" fill="#d6d6d6"/></svg>
<svg class="r" style="left:708px;top:439.5px;" width="28" height="28" viewBox="0 0 28 28"><circle cx="14" cy="14" r="13" fill="none" stroke="#6a6a6a" stroke-width="1.8"/></svg>
<svg class="r" style="left:1333px;top:439.5px;" width="28" height="28" viewBox="0 0 28 28"><circle cx="14" cy="14" r="13" fill="none" stroke="#6a6a6a" stroke-width="1.8"/></svg>
<div class="t" style="left:129.60px;top:444.44px;font-size:20px;color:#cfcfcf;letter-spacing:0.564px;">'Button to Button' Reassignment</div>
<div class="t" style="left:754.00px;top:444.44px;font-size:20px;color:#cfcfcf;letter-spacing:0.209px;">Active Palette</div>
<div class="t" style="left:1378.00px;top:444.44px;font-size:20px;color:#cfcfcf;letter-spacing:0.511px;">'Menu to Button' Reassignment</div>
<div class="r" style="left:250px;top:518px;width:1110px;height:470px;background:rgba(0,0,0,0.2);border-radius:34px;filter:blur(5px);"></div>
<div class="r" style="left:276px;top:543px;width:1057px;height:419px;background:#2e2e2e;"></div>
<div class="r" style="left:276px;top:952px;width:1057px;height:10px;background:#313131;"></div>
<div class="r" style="left:276px;top:543px;width:1057px;height:32px;background:#262626;"></div>
<div class="r" style="left:277px;top:544px;width:47px;height:30px;background:#3a3a3a;"></div>
<div class="r" style="left:326px;top:544px;width:46px;height:30px;background:#3a3a3a;"></div>
<div class="r" style="left:374px;top:544px;width:958px;height:30px;background:#5b5b5b;"></div>
<svg class="r" style="left:292px;top:551px;" width="18" height="17" viewBox="0 0 18 17"><path d="M3 3 L15 14 M15 3 L3 14" stroke="#a6a6a6" stroke-width="4.2"/></svg>
<svg class="r" style="left:340px;top:554px;" width="18" height="8" viewBox="0 0 18 8"><rect x="1" y="1" width="16" height="6" fill="#9e9e9e"/></svg>
<div class="t" style="left:655.00px;top:549.14px;font-size:22px;color:#b9b9b9;font-weight:bold;-webkit-text-stroke:0.1px currentColor;letter-spacing:-0.171px;">Keyboard - MC English (United States)</div>
<div class="r" style="left:299.5px;top:591.5px;width:57.3px;height:54.5px;box-sizing:border-box;border:2px solid #555555;"></div>
<svg class="r" style="left:300.5px;top:592.5px;" width="55.3" height="52.5" viewBox="0 0 55.3 52.5"><rect x="21.5" y="6" width="25" height="25" rx="3.5" fill="none" stroke="#a8a8a8" stroke-width="2.4"/><rect x="24" y="8.5" width="20" height="14" fill="#2a9a78"/><rect x="24" y="24" width="20" height="4.5" fill="#a8a8a8"/></svg>
<div class="t" style="left:304.30px;top:620.54px;font-size:20px;color:#d6d6d6;">Esc</div>
<div class="r" style="left:413.7px;top:591.5px;width:56.1px;height:54.5px;box-sizing:border-box;border:2px solid #555555;"></div>
<div class="t" style="left:418.50px;top:620.54px;font-size:20px;color:#d6d6d6;">F1</div>
<div class="r" style="left:467.8px;top:591.5px;width:56.1px;height:54.5px;box-sizing:border-box;border:2px solid #555555;"></div>
<div class="t" style="left:472.60px;top:620.54px;font-size:20px;color:#d6d6d6;">F2</div>
<div class="t" style="left:489.74px;top:601.04px;font-size:20px;color:#a9a9a9;font-weight:bold;-webkit-text-stroke:0.1px currentColor;">Au</div>
<div class="r" style="left:521.9px;top:591.5px;width:56.1px;height:54.5px;box-sizing:border-box;border:2px solid #555555;"></div>
<div class="t" style="left:526.70px;top:620.54px;font-size:20px;color:#d6d6d6;">F3</div>
<div class="r" style="left:576.0px;top:591.5px;width:56.1px;height:54.5px;box-sizing:border-box;border:2px solid #555555;"></div>
<div class="t" style="left:580.80px;top:620.54px;font-size:20px;color:#d6d6d6;">F4</div>
<div class="r" style="left:653.6px;top:591.5px;width:56.1px;height:54.5px;box-sizing:border-box;border:2px solid #555555;"></div>
<div class="t" style="left:658.40px;top:620.54px;font-size:20px;color:#d6d6d6;">F5</div>
<div class="r" style="left:707.7px;top:591.5px;width:56.1px;height:54.5px;box-sizing:border-box;border:2px solid #555555;"></div>
<div class="t" style="left:712.50px;top:620.54px;font-size:20px;color:#d6d6d6;">F6</div>
<div class="r" style="left:761.8px;top:591.5px;width:56.1px;height:54.5px;box-sizing:border-box;border:2px solid #555555;"></div>
<div class="t" style="left:766.60px;top:620.54px;font-size:20px;color:#d6d6d6;">F7</div>
<div class="r" style="left:815.9px;top:591.5px;width:56.1px;height:54.5px;box-sizing:border-box;border:2px solid #555555;"></div>
<div class="t" style="left:820.70px;top:620.54px;font-size:20px;color:#d6d6d6;">F8</div>
<div class="r" style="left:893.8px;top:591.5px;width:56.1px;height:54.5px;box-sizing:border-box;border:2px solid #555555;"></div>
<div class="t" style="left:898.60px;top:620.54px;font-size:20px;color:#d6d6d6;">F9</div>
<div class="t" style="left:914.62px;top:601.04px;font-size:20px;color:#a9a9a9;font-weight:bold;-webkit-text-stroke:0.1px currentColor;">M1</div>
<div class="r" style="left:947.9px;top:591.5px;width:56.1px;height:54.5px;box-sizing:border-box;border:2px solid #555555;"></div>
<div class="t" style="left:952.70px;top:620.54px;font-size:20px;color:#d6d6d6;">F10</div>
<div class="t" style="left:968.72px;top:601.04px;font-size:20px;color:#a9a9a9;font-weight:bold;-webkit-text-stroke:0.1px currentColor;">M2</div>
<div class="r" style="left:1002.0px;top:591.5px;width:56.1px;height:54.5px;box-sizing:border-box;border:2px solid #555555;"></div>
<div class="t" style="left:1006.80px;top:620.54px;font-size:20px;color:#d6d6d6;">F11</div>
<div class="t" style="left:1022.82px;top:601.04px;font-size:20px;color:#a9a9a9;font-weight:bold;-webkit-text-stroke:0.1px currentColor;">M3</div>
<div class="r" style="left:1056.1px;top:591.5px;width:56.1px;height:54.5px;box-sizing:border-box;border:2px solid #555555;"></div>
<div class="t" style="left:1060.90px;top:620.54px;font-size:20px;color:#d6d6d6;">F12</div>
<div class="t" style="left:1076.92px;top:601.04px;font-size:20px;color:#a9a9a9;font-weight:bold;-webkit-text-stroke:0.1px currentColor;">M4</div>
<div class="r" style="left:1134.3px;top:591.5px;width:56.1px;height:54.5px;box-sizing:border-box;border:2px solid #555555;"></div>
<div class="t" style="left:1139.10px;top:620.54px;font-size:20px;color:#d6d6d6;">F13</div>
<div class="r" style="left:1188.4px;top:591.5px;width:56.1px;height:54.5px;box-sizing:border-box;border:2px solid #555555;"></div>
<div class="r" style="left:1242.5px;top:591.5px;width:56.1px;height:54.5px;box-sizing:border-box;border:2px solid #555555;"></div>
<div class="r" style="left:299.5px;top:670.1px;width:56.1px;height:53.9px;box-sizing:border-box;border:2px solid #555555;"></div>
<svg class="r" style="left:300.5px;top:671.1px;" width="54.1" height="51.9" viewBox="0 0 54.1 51.9"><path d="M24 9 L44 18.0 L24 27 Z" fill="#8c8c8c" stroke="#8c8c8c" stroke-width="1.5" stroke-linejoin="round"/></svg>
<div class="t" style="left:306.50px;top:694.14px;font-size:20px;color:#d6d6d6;">`</div>
<div class="r" style="left:353.6px;top:670.1px;width:56.1px;height:53.9px;box-sizing:border-box;border:2px solid #555555;"></div>
<svg class="r" style="left:354.6px;top:671.1px;" width="54.1" height="51.9" viewBox="0 0 54.1 51.9"><path d="M37 11 L19 18.0 L37 25 Z" fill="#8c8c8c" stroke="#8c8c8c" stroke-width="1.5" stroke-linejoin="round"/><rect x="39.5" y="10" width="3.5" height="16" rx="1.5" fill="#8c8c8c"/><rect x="45.5" y="10" width="3.5" height="16" rx="1.5" fill="#8c8c8c"/></svg>
<div class="t" style="left:358.40px;top:699.14px;font-size:20px;color:#d6d6d6;">1</div>
<div class="r" style="left:407.7px;top:670.1px;width:56.1px;height:53.9px;box-sizing:border-box;border:2px solid #555555;"></div>
<svg class="r" style="left:408.7px;top:671.1px;" width="54.1" height="51.9" viewBox="0 0 54.1 51.9"><rect x="17" y="10" width="3.5" height="16" rx="1.5" fill="#8c8c8c"/><rect x="23.5" y="10" width="3.5" height="16" rx="1.5" fill="#8c8c8c"/><path d="M30 11 L47.5 18.0 L30 25 Z" fill="#8c8c8c" stroke="#8c8c8c" stroke-width="1.5" stroke-linejoin="round"/></svg>
<div class="t" style="left:412.50px;top:699.14px;font-size:20px;color:#d6d6d6;">2</div>
<div class="r" style="left:461.8px;top:670.1px;width:56.1px;height:53.9px;box-sizing:border-box;border:2px solid #555555;"></div>
<svg class="r" style="left:462.8px;top:671.1px;" width="54.1" height="51.9" viewBox="0 0 54.1 51.9"><path d="M38 11 L21 18.0 L38 25 Z" fill="#8c8c8c" stroke="#8c8c8c" stroke-width="1.5" stroke-linejoin="round"/><rect x="40.5" y="10" width="4.5" height="16" rx="1.5" fill="#8c8c8c"/></svg>
<div class="t" style="left:466.60px;top:699.14px;font-size:20px;color:#d6d6d6;">3</div>
<div class="r" style="left:515.9px;top:670.1px;width:56.1px;height:53.9px;box-sizing:border-box;border:2px solid #555555;"></div>
<svg class="r" style="left:516.9px;top:671.1px;" width="54.1" height="51.9" viewBox="0 0 54.1 51.9"><rect x="21.3" y="10" width="4.199999999999999" height="16" rx="1.5" fill="#8c8c8c"/><path d="M27.5 11 L45 18.0 L27.5 25 Z" fill="#8c8c8c" stroke="#8c8c8c" stroke-width="1.5" stroke-linejoin="round"/></svg>
<div class="t" style="left:520.70px;top:699.14px;font-size:20px;color:#d6d6d6;">4</div>
<div class="r" style="left:570.0px;top:670.1px;width:56.1px;height:53.9px;box-sizing:border-box;border:2px solid #555555;"></div>
<svg class="r" style="left:571.0px;top:671.1px;" width="54.1" height="51.9" viewBox="0 0 54.1 51.9"><path d="M24 9 L44 18.0 L24 27 Z" fill="#8c8c8c" stroke="#8c8c8c" stroke-width="1.5" stroke-linejoin="round"/></svg>
<div class="t" style="left:574.80px;top:699.14px;font-size:20px;color:#d6d6d6;">5</div>
<div class="r" style="left:624.1px;top:670.1px;width:56.1px;height:53.9px;box-sizing:border-box;border:2px solid #555555;"></div>
<svg class="r" style="left:625.1px;top:671.1px;" width="54.1" height="51.9" viewBox="0 0 54.1 51.9"><rect x="17" y="10" width="4" height="16" rx="1.5" fill="#8c8c8c"/><path d="M23 11 L42.5 18.0 L23 25 Z" fill="#8c8c8c" stroke="#8c8c8c" stroke-width="1.5" stroke-linejoin="round"/><rect x="44.8" y="10" width="3.8000000000000043" height="16" rx="1.5" fill="#8c8c8c"/></svg>
<div class="t" style="left:628.90px;top:699.14px;font-size:20px;color:#d6d6d6;">6</div>
<div class="r" style="left:678.2px;top:670.1px;width:56.1px;height:53.9px;box-sizing:border-box;border:2px solid #555555;"></div>
<div class="t" style="left:683.00px;top:699.14px;font-size:20px;color:#d6d6d6;">7</div>
<div class="t" style="left:702.34px;top:679.64px;font-size:20px;color:#a9a9a9;font-weight:bold;-webkit-text-stroke:0.1px currentColor;">V2</div>
<div class="r" style="left:732.3px;top:670.1px;width:56.1px;height:53.9px;box-sizing:border-box;border:2px solid #555555;"></div>
<div class="t" style="left:737.10px;top:699.14px;font-size:20px;color:#d6d6d6;">8</div>
<div class="t" style="left:756.44px;top:679.64px;font-size:20px;color:#a9a9a9;font-weight:bold;-webkit-text-stroke:0.1px currentColor;">V1</div>
<div class="r" style="left:786.4px;top:670.1px;width:56.1px;height:53.9px;box-sizing:border-box;border:2px solid #555555;"></div>
<div class="t" style="left:791.20px;top:699.14px;font-size:20px;color:#d6d6d6;">9</div>
<div class="t" style="left:809.43px;top:679.64px;font-size:20px;color:#a9a9a9;font-weight:bold;-webkit-text-stroke:0.1px currentColor;">A1</div>
<div class="r" style="left:840.5px;top:670.1px;width:56.1px;height:53.9px;box-sizing:border-box;border:2px solid #555555;"></div>
<div class="t" style="left:845.30px;top:699.14px;font-size:20px;color:#d6d6d6;">0</div>
<div class="t" style="left:863.53px;top:679.64px;font-size:20px;color:#a9a9a9;font-weight:bold;-webkit-text-stroke:0.1px currentColor;">A2</div>
<div class="r" style="left:894.6px;top:670.1px;width:56.1px;height:53.9px;box-sizing:border-box;border:2px solid #555555;"></div>
<div class="t" style="left:899.40px;top:699.14px;font-size:20px;color:#d6d6d6;">-</div>
<div class="t" style="left:917.63px;top:679.64px;font-size:20px;color:#a9a9a9;font-weight:bold;-webkit-text-stroke:0.1px currentColor;">A3</div>
<div class="r" style="left:948.7px;top:670.1px;width:56.1px;height:53.9px;box-sizing:border-box;border:2px solid #555555;"></div>
<div class="t" style="left:953.50px;top:699.14px;font-size:20px;color:#d6d6d6;">=</div>
<div class="t" style="left:971.73px;top:679.64px;font-size:20px;color:#a9a9a9;font-weight:bold;-webkit-text-stroke:0.1px currentColor;">A4</div>
<div class="r" style="left:1002.8px;top:670.1px;width:111.2px;height:53.9px;box-sizing:border-box;border:2px solid #555555;"></div>
<div class="r" style="left:299.5px;top:722.0px;width:84.5px;height:53.9px;box-sizing:border-box;border:2px solid #555555;"></div>
<div class="r" style="left:382.0px;top:722.0px;width:56.04px;height:53.9px;box-sizing:border-box;border:2px solid #555555;"></div>
<svg class="r" style="left:383.0px;top:723.0px;" width="54.04" height="51.9" viewBox="0 0 54.04 51.9"><path d="M17 8.5 H26.5 V27.5 H17" fill="none" stroke="#8c8c8c" stroke-width="5" stroke-linejoin="miter"/><path d="M31 18.5 L37.05 13 V16.3 H47.5 V20.7 H37.05 V24 Z" fill="#8c8c8c"/></svg>
<div class="t" style="left:386.50px;top:751.04px;font-size:20px;color:#d6d6d6;">Q</div>
<div class="r" style="left:436.04px;top:722.0px;width:56.04px;height:53.9px;box-sizing:border-box;border:2px solid #555555;"></div>
<svg class="r" style="left:437.04px;top:723.0px;" width="54.04" height="51.9" viewBox="0 0 54.04 51.9"><path d="M34 18.5 L27.95 13 V16.3 H18.5 V20.7 H27.95 V24 Z" fill="#8c8c8c"/><path d="M49 8.5 H39.0 V27.5 H49" fill="none" stroke="#8c8c8c" stroke-width="5" stroke-linejoin="miter"/></svg>
<div class="t" style="left:440.54px;top:751.04px;font-size:20px;color:#d6d6d6;">W</div>
<div class="r" style="left:490.08px;top:722.0px;width:56.04px;height:53.9px;box-sizing:border-box;border:2px solid #555555;"></div>
<svg class="r" style="left:491.08px;top:723.0px;" width="54.04" height="51.9" viewBox="0 0 54.04 51.9"><path d="M27 8.5 H36.5 V27.5 H27" fill="none" stroke="#8c8c8c" stroke-width="5" stroke-linejoin="miter"/></svg>
<div class="t" style="left:494.58px;top:751.04px;font-size:20px;color:#d6d6d6;">E</div>
<div class="r" style="left:544.12px;top:722.0px;width:56.04px;height:53.9px;box-sizing:border-box;border:2px solid #555555;"></div>
<svg class="r" style="left:545.12px;top:723.0px;" width="54.04" height="51.9" viewBox="0 0 54.04 51.9"><path d="M39 8.5 H29.5 V27.5 H39" fill="none" stroke="#8c8c8c" stroke-width="5" stroke-linejoin="miter"/></svg>
<div class="t" style="left:548.62px;top:751.04px;font-size:20px;color:#d6d6d6;">R</div>
<div class="r" style="left:598.16px;top:722.0px;width:56.04px;height:53.9px;box-sizing:border-box;border:2px solid #555555;"></div>
<svg class="r" style="left:599.16px;top:723.0px;" width="54.04" height="51.9" viewBox="0 0 54.04 51.9"><path d="M19 8.5 H28.5 V27.5 H19" fill="none" stroke="#8c8c8c" stroke-width="5" stroke-linejoin="miter"/><path d="M47 8.5 H37.5 V27.5 H47" fill="none" stroke="#8c8c8c" stroke-width="5" stroke-linejoin="miter"/></svg>
<div class="t" style="left:602.66px;top:751.04px;font-size:20px;color:#d6d6d6;">T</div>
<div class="r" style="left:652.2px;top:722.0px;width:56.04px;height:53.9px;box-sizing:border-box;border:2px solid #555555;"></div>
<svg class="r" style="left:653.2px;top:723.0px;" width="54.04" height="51.9" viewBox="0 0 54.04 51.9"><rect x="19" y="12" width="27.5" height="12" rx="1" fill="none" stroke="#8c8c8c" stroke-width="4"/><rect x="30.5" y="6" width="4.0" height="25" rx="1.5" fill="#8c8c8c"/></svg>
<div class="t" style="left:656.70px;top:751.04px;font-size:20px;color:#d6d6d6;">Y</div>
<div class="r" style="left:706.24px;top:722.0px;width:56.04px;height:53.9px;box-sizing:border-box;border:2px solid #555555;"></div>
<svg class="r" style="left:707.24px;top:723.0px;" width="54.04" height="51.9" viewBox="0 0 54.04 51.9"><rect x="21" y="6" width="4" height="24" rx="2" fill="#8c8c8c"/><rect x="27.5" y="10" width="17.5" height="15.5" rx="1" fill="#8c8c8c"/><rect x="29.5" y="12.2" width="2" height="2" fill="#2e2e2e"/><rect x="29.5" y="21.5" width="2" height="2" fill="#2e2e2e"/><rect x="33.3" y="12.2" width="2" height="2" fill="#2e2e2e"/><rect x="33.3" y="21.5" width="2" height="2" fill="#2e2e2e"/><rect x="37.1" y="12.2" width="2" height="2" fill="#2e2e2e"/><rect x="37.1" y="21.5" width="2" height="2" fill="#2e2e2e"/><rect x="40.9" y="12.2" width="2" height="2" fill="#2e2e2e"/><rect x="40.9" y="21.5" width="2" height="2" fill="#2e2e2e"/></svg>
<div class="t" style="left:710.74px;top:751.04px;font-size:20px;color:#d6d6d6;">U</div>
<div class="r" style="left:760.28px;top:722.0px;width:56.04px;height:53.9px;box-sizing:border-box;border:2px solid #555555;"></div>
<svg class="r" style="left:761.28px;top:723.0px;" width="54.04" height="51.9" viewBox="0 0 54.04 51.9"><path d="M27 8.5 H36.5 V27.5 H27" fill="none" stroke="#8c8c8c" stroke-width="5" stroke-linejoin="miter"/></svg>
<div class="t" style="left:764.78px;top:751.04px;font-size:20px;color:#d6d6d6;">I</div>
<div class="r" style="left:814.32px;top:722.0px;width:56.04px;height:53.9px;box-sizing:border-box;border:2px solid #555555;"></div>
<svg class="r" style="left:815.3199999999999px;top:723.0px;" width="54.04" height="51.9" viewBox="0 0 54.04 51.9"><path d="M39 8.5 H29.5 V27.5 H39" fill="none" stroke="#8c8c8c" stroke-width="5" stroke-linejoin="miter"/></svg>
<div class="t" style="left:818.82px;top:751.04px;font-size:20px;color:#d6d6d6;">O</div>
<div class="r" style="left:868.36px;top:722.0px;width:56.04px;height:53.9px;box-sizing:border-box;border:2px solid #555555;"></div>
<svg class="r" style="left:869.36px;top:723.0px;" width="54.04" height="51.9" viewBox="0 0 54.04 51.9"><rect x="20" y="6" width="26" height="4.800000000000001" rx="2" fill="#8c8c8c"/><rect x="20" y="25.2" width="26" height="4.800000000000001" rx="2" fill="#8c8c8c"/><rect x="30.6" y="9" width="4.799999999999997" height="18" rx="0" fill="#8c8c8c"/><path d="M28.5 11.0 L20 18.0 L28.5 25.0 Z" fill="#8c8c8c"/></svg>
<div class="t" style="left:872.86px;top:751.04px;font-size:20px;color:#d6d6d6;">P</div>
<div class="r" style="left:922.4px;top:722.0px;width:56.04px;height:53.9px;box-sizing:border-box;border:2px solid #555555;"></div>
<svg class="r" style="left:923.4px;top:723.0px;" width="54.04" height="51.9" viewBox="0 0 54.04 51.9"><rect x="20" y="6" width="26" height="4.800000000000001" rx="2" fill="#8c8c8c"/><rect x="20" y="25.2" width="26" height="4.800000000000001" rx="2" fill="#8c8c8c"/><rect x="30.6" y="9" width="4.799999999999997" height="18" rx="0" fill="#8c8c8c"/><path d="M28.5 11.0 L20 18.0 L28.5 25.0 Z" fill="#8c8c8c"/><path d="M37.5 11.0 L46 18.0 L37.5 25.0 Z" fill="#8c8c8c"/></svg>
<div class="t" style="left:926.90px;top:751.04px;font-size:20px;color:#d6d6d6;">[</div>
<div class="r" style="left:976.44px;top:722.0px;width:56.04px;height:53.9px;box-sizing:border-box;border:2px solid #555555;"></div>
<svg class="r" style="left:977.4399999999999px;top:723.0px;" width="54.04" height="51.9" viewBox="0 0 54.04 51.9"><rect x="20" y="6" width="26" height="4.800000000000001" rx="2" fill="#8c8c8c"/><rect x="20" y="25.2" width="26" height="4.800000000000001" rx="2" fill="#8c8c8c"/><rect x="30.6" y="9" width="4.799999999999997" height="18" rx="0" fill="#8c8c8c"/><path d="M37.5 11.0 L46 18.0 L37.5 25.0 Z" fill="#8c8c8c"/></svg>
<div class="t" style="left:980.94px;top:751.04px;font-size:20px;color:#d6d6d6;">]</div>
<div class="r" style="left:1030.5px;top:722.0px;width:83.5px;height:53.9px;box-sizing:border-box;border:2px solid #555555;"></div>
<svg class="r" style="left:1031.5px;top:723.0px;" width="81.5" height="51.9" viewBox="0 0 81.5 51.9"><rect x="31.5" y="3" width="31" height="31" rx="3.5" fill="#8a8a8a"/><rect x="34" y="5.5" width="12" height="26" rx="1" fill="#2e2e2e"/><rect x="35.5" y="7.5" width="2.2" height="2.2" fill="#9a9a9a"/><rect x="39.5" y="7.5" width="2.2" height="2.2" fill="#9a9a9a"/><rect x="43.5" y="7.5" width="2.2" height="2.2" fill="#9a9a9a"/><rect x="37.5" y="11.7" width="2.2" height="2.2" fill="#9a9a9a"/><rect x="41.5" y="11.7" width="2.2" height="2.2" fill="#9a9a9a"/><rect x="35.5" y="15.9" width="2.2" height="2.2" fill="#9a9a9a"/><rect x="39.5" y="15.9" width="2.2" height="2.2" fill="#9a9a9a"/><rect x="43.5" y="15.9" width="2.2" height="2.2" fill="#9a9a9a"/><rect x="37.5" y="20.1" width="2.2" height="2.2" fill="#9a9a9a"/><rect x="41.5" y="20.1" width="2.2" height="2.2" fill="#9a9a9a"/><rect x="35.5" y="24.3" width="2.2" height="2.2" fill="#9a9a9a"/><rect x="39.5" y="24.3" width="2.2" height="2.2" fill="#9a9a9a"/><rect x="43.5" y="24.3" width="2.2" height="2.2" fill="#9a9a9a"/><rect x="37.5" y="28.5" width="2.2" height="2.2" fill="#9a9a9a"/><rect x="41.5" y="28.5" width="2.2" height="2.2" fill="#9a9a9a"/><rect x="46.5" y="7.5" width="2.2" height="2.2" fill="#2e2e2e"/><rect x="46.5" y="13.7" width="2.2" height="2.2" fill="#2e2e2e"/><rect x="46.5" y="15.9" width="2.2" height="2.2" fill="#2e2e2e"/><rect x="46.5" y="22.1" width="2.2" height="2.2" fill="#2e2e2e"/><rect x="46.5" y="24.3" width="2.2" height="2.2" fill="#2e2e2e"/><rect x="46.5" y="30.5" width="2.2" height="2.2" fill="#2e2e2e"/><rect x="52" y="5.5" width="1" height="26" fill="#959595"/><rect x="56" y="5.5" width="1" height="26" fill="#959595"/></svg>
<div class="t" style="left:1037.50px;top:751.04px;font-size:20px;color:#d6d6d6;">\</div>
<div class="r" style="left:299.5px;top:773.9px;width:98.5px;height:54.0px;box-sizing:border-box;border:2px solid #555555;"></div>
<div class="r" style="left:396.0px;top:773.9px;width:56.0px;height:54.0px;box-sizing:border-box;border:2px solid #555555;"></div>
<svg class="r" style="left:397.0px;top:774.9px;" width="54.0" height="52.0" viewBox="0 0 54.0 52.0"><rect x="16" y="9" width="9" height="20" rx="4" fill="#22a022"/><rect x="29" y="4" width="4" height="28" rx="2" fill="#8c8c8c"/><path d="M35.5 18.0 L42.1 12 V15.6 H50.5 V20.4 H42.1 V24 Z" fill="#8c8c8c"/></svg>
<div class="t" style="left:400.50px;top:802.94px;font-size:20px;color:#d6d6d6;">A</div>
<div class="r" style="left:450.0px;top:773.9px;width:56.0px;height:54.0px;box-sizing:border-box;border:2px solid #555555;"></div>
<svg class="r" style="left:451.0px;top:774.9px;" width="54.0" height="52.0" viewBox="0 0 54.0 52.0"><path d="M30 18.0 L23.4 12 V15.6 H15 V20.4 H23.4 V24 Z" fill="#8c8c8c"/><rect x="33" y="4" width="4" height="28" rx="2" fill="#8c8c8c"/><rect x="41" y="9" width="8.5" height="20" rx="4" fill="#22a022"/></svg>
<div class="t" style="left:454.50px;top:802.94px;font-size:20px;color:#d6d6d6;">S</div>
<div class="r" style="left:504.0px;top:773.9px;width:56.0px;height:54.0px;box-sizing:border-box;border:2px solid #555555;"></div>
<svg class="r" style="left:505.0px;top:774.9px;" width="54.0" height="52.0" viewBox="0 0 54.0 52.0"><rect x="19" y="4" width="28" height="28" rx="4" fill="#8c8c8c"/><path d="M23 10.5 H27.5 V25.5 H23" fill="none" stroke="#2e2e2e" stroke-width="3" stroke-linejoin="miter"/></svg>
<div class="t" style="left:508.50px;top:802.94px;font-size:20px;color:#d6d6d6;">D</div>
<div class="r" style="left:558.0px;top:773.9px;width:56.0px;height:54.0px;box-sizing:border-box;border:2px solid #555555;"></div>
<svg class="r" style="left:559.0px;top:774.9px;" width="54.0" height="52.0" viewBox="0 0 54.0 52.0"><rect x="19" y="4" width="28" height="28" rx="4" fill="#8c8c8c"/><path d="M43 10.5 H38.5 V25.5 H43" fill="none" stroke="#2e2e2e" stroke-width="3" stroke-linejoin="miter"/></svg>
<div class="t" style="left:562.50px;top:802.94px;font-size:20px;color:#d6d6d6;">F</div>
<div class="r" style="left:612.0px;top:773.9px;width:56.0px;height:54.0px;box-sizing:border-box;border:2px solid #555555;"></div>
<svg class="r" style="left:613.0px;top:774.9px;" width="54.0" height="52.0" viewBox="0 0 54.0 52.0"><rect x="19" y="4" width="28" height="28" rx="4" fill="#8c8c8c"/><path d="M23 10.5 H27.5 V25.5 H23" fill="none" stroke="#2e2e2e" stroke-width="3" stroke-linejoin="miter"/><path d="M43 10.5 H38.5 V25.5 H43" fill="none" stroke="#2e2e2e" stroke-width="3" stroke-linejoin="miter"/></svg>
<div class="t" style="left:616.50px;top:802.94px;font-size:20px;color:#d6d6d6;">G</div>
<div class="r" style="left:666.0px;top:773.9px;width:56.0px;height:54.0px;box-sizing:border-box;border:2px solid #555555;"></div>
<svg class="r" style="left:667.0px;top:774.9px;" width="54.0" height="52.0" viewBox="0 0 54.0 52.0"><circle cx="33" cy="18" r="12.6" fill="none" stroke="#8c8c8c" stroke-width="2.2"/><circle cx="33" cy="18" r="8" fill="#8c8c8c"/><path d="M29 18 H37 M33 14 V22" stroke="#2e2e2e" stroke-width="1.8"/></svg>
<div class="t" style="left:670.50px;top:802.94px;font-size:20px;color:#d6d6d6;">H</div>
<div class="r" style="left:720.0px;top:773.9px;width:56.0px;height:54.0px;box-sizing:border-box;border:2px solid #555555;"></div>
<svg class="r" style="left:721.0px;top:774.9px;" width="54.0" height="52.0" viewBox="0 0 54.0 52.0"><path d="M44 8 L21 18.0 L44 28 Z" fill="#8c8c8c" stroke="#8c8c8c" stroke-width="1.5" stroke-linejoin="round"/><path d="M33 18 H43" stroke="#2e2e2e" stroke-width="1.6"/></svg>
<div class="t" style="left:724.50px;top:802.94px;font-size:20px;color:#d6d6d6;">J</div>
<div class="r" style="left:774.0px;top:773.9px;width:56.0px;height:54.0px;box-sizing:border-box;border:2px solid #555555;"></div>
<svg class="r" style="left:775.0px;top:774.9px;" width="54.0" height="52.0" viewBox="0 0 54.0 52.0"><rect x="22.5" y="9" width="7.5" height="19" rx="2" fill="#8c8c8c"/><rect x="35.5" y="9" width="7.5" height="19" rx="2" fill="#8c8c8c"/></svg>
<div class="t" style="left:778.50px;top:802.94px;font-size:20px;color:#d6d6d6;">K</div>
<div class="r" style="left:828.0px;top:773.9px;width:56.0px;height:54.0px;box-sizing:border-box;border:2px solid #555555;"></div>
<svg class="r" style="left:829.0px;top:774.9px;" width="54.0" height="52.0" viewBox="0 0 54.0 52.0"><path d="M22 8 L45 18.0 L22 28 Z" fill="#8c8c8c" stroke="#8c8c8c" stroke-width="1.5" stroke-linejoin="round"/><path d="M22 18 H32" stroke="#2e2e2e" stroke-width="1.6"/></svg>
<div class="t" style="left:832.50px;top:802.94px;font-size:20px;color:#d6d6d6;">L</div>
<div class="r" style="left:882.0px;top:773.9px;width:56.0px;height:54.0px;box-sizing:border-box;border:2px solid #555555;"></div>
<svg class="r" style="left:883.0px;top:774.9px;" width="54.0" height="52.0" viewBox="0 0 54.0 52.0"><rect x="24" y="12" width="17.5" height="22" rx="8.5" fill="#8c8c8c"/><path d="M32.7 12 V19" stroke="#2e2e2e" stroke-width="1.6"/><path d="M32.7 12 C32.7 8 36 8 36 4" stroke="#8c8c8c" stroke-width="1.5" fill="none"/></svg>
<div class="t" style="left:886.50px;top:802.94px;font-size:20px;color:#d6d6d6;">;</div>
<div class="r" style="left:936.0px;top:773.9px;width:56.0px;height:54.0px;box-sizing:border-box;border:2px solid #555555;"></div>
<svg class="r" style="left:937.0px;top:774.9px;" width="54.0" height="52.0" viewBox="0 0 54.0 52.0"><path d="M33 10 L42.5 26 L23.5 26 Z" fill="#c23ec2" stroke="#c23ec2" stroke-width="1.5" stroke-linejoin="round"/><rect x="25" y="30" width="15" height="1.5" fill="#4a3a4a"/></svg>
<div class="t" style="left:940.50px;top:802.94px;font-size:20px;color:#d6d6d6;">"</div>
<div class="r" style="left:990px;top:773.9px;width:124px;height:54.0px;box-sizing:border-box;border:2px solid #555555;"></div>
<div class="r" style="left:299.5px;top:825.9px;width:124.5px;height:54.2px;box-sizing:border-box;border:2px solid #555555;"></div>
<div class="r" style="left:422.0px;top:825.9px;width:56.04px;height:54.2px;box-sizing:border-box;border:2px solid #555555;"></div>
<svg class="r" style="left:423.0px;top:826.9px;" width="54.04" height="52.2" viewBox="0 0 54.04 52.2"><rect x="15" y="3" width="4" height="10" rx="1" fill="#8c8c8c"/><rect x="47" y="3" width="4" height="10" rx="1" fill="#8c8c8c"/><rect x="18" y="5.5" width="30" height="3.5" rx="0" fill="#8c8c8c"/><circle cx="33" cy="15" r="3.5" fill="#8c8c8c"/><path d="M22 8 L26 19 L29 22 L29 28 L25 31 L25 37 M44 8 L40 19 L37 22 L37 28 L41 31 L41 37" fill="none" stroke="#8c8c8c" stroke-width="3.6" stroke-linejoin="round"/><rect x="28" y="19" width="10" height="10" rx="3" fill="#8c8c8c"/></svg>
<div class="t" style="left:427.00px;top:854.94px;font-size:20px;color:#d6d6d6;">Z</div>
<div class="r" style="left:476.04px;top:825.9px;width:56.04px;height:54.2px;box-sizing:border-box;border:2px solid #555555;"></div>
<svg class="r" style="left:477.04px;top:826.9px;" width="54.04" height="52.2" viewBox="0 0 54.04 52.2"><path d="M20 5 L41 27 M46 5 L25 27" stroke="#8c8c8c" stroke-width="3.2"/><circle cx="22" cy="30" r="4.2" fill="none" stroke="#8c8c8c" stroke-width="2.8"/><circle cx="44" cy="30" r="4.2" fill="none" stroke="#8c8c8c" stroke-width="2.8"/></svg>
<div class="t" style="left:481.04px;top:854.94px;font-size:20px;color:#d6d6d6;">X</div>
<div class="r" style="left:530.08px;top:825.9px;width:56.04px;height:54.2px;box-sizing:border-box;border:2px solid #555555;"></div>
<svg class="r" style="left:531.08px;top:826.9px;" width="54.04" height="52.2" viewBox="0 0 54.04 52.2"><path d="M19 2.5 H30 L33 6 V24 H19 Z" fill="#8c8c8c"/><path d="M28.5 12.5 H41 L46 17.5 V34 H28.5 Z" fill="#2e2e2e" stroke="#2e2e2e" stroke-width="2.5"/><path d="M28.5 12.5 H41 L46 17.5 V34 H28.5 Z" fill="#8c8c8c"/></svg>
<div class="t" style="left:535.08px;top:854.94px;font-size:20px;color:#d6d6d6;">C</div>
<div class="r" style="left:584.12px;top:825.9px;width:56.04px;height:54.2px;box-sizing:border-box;border:2px solid #555555;"></div>
<svg class="r" style="left:585.12px;top:826.9px;" width="54.04" height="52.2" viewBox="0 0 54.04 52.2"><path d="M44.5 13.0 L36.8 6 V10.2 H20 V15.8 H36.8 V20 Z" fill="#d6c42a"/><path d="M19 24 H31 L29.5 32 H17 Z M33.5 24 H49.5 L48 32 H32 Z" fill="#8a8a8a"/></svg>
<div class="t" style="left:589.12px;top:854.94px;font-size:20px;color:#d6d6d6;">V</div>
<div class="r" style="left:638.16px;top:825.9px;width:56.04px;height:54.2px;box-sizing:border-box;border:2px solid #555555;"></div>
<svg class="r" style="left:639.16px;top:826.9px;" width="54.04" height="52.2" viewBox="0 0 54.04 52.2"><path d="M44.5 13.0 L36.8 6 V10.2 H20 V15.8 H36.8 V20 Z" fill="#c83a3a"/><path d="M19.5 24 H49.5 L48 32 H17 Z" fill="#8a8a8a"/></svg>
<div class="t" style="left:643.16px;top:854.94px;font-size:20px;color:#d6d6d6;">B</div>
<div class="r" style="left:692.2px;top:825.9px;width:56.04px;height:54.2px;box-sizing:border-box;border:2px solid #555555;"></div>
<svg class="r" style="left:693.2px;top:826.9px;" width="54.04" height="52.2" viewBox="0 0 54.04 52.2"><rect x="27" y="10" width="13" height="24" rx="6.5" fill="#8c8c8c"/><path d="M33.5 10 V17" stroke="#2e2e2e" stroke-width="1.5"/><path d="M33.5 10 C33.5 6 36 6 36 3" stroke="#8c8c8c" stroke-width="1.4" fill="none"/><path d="M22.5 14 C19.5 18 19.5 24 22.5 28 M19 11.5 C15.5 17 15.5 25 19 30.5 M44.5 14 C47.5 18 47.5 24 44.5 28 M48 11.5 C51.5 17 51.5 25 48 30.5" fill="none" stroke="#8c8c8c" stroke-width="1.6"/></svg>
<div class="t" style="left:697.20px;top:854.94px;font-size:20px;color:#d6d6d6;">N</div>
<div class="r" style="left:746.24px;top:825.9px;width:56.04px;height:54.2px;box-sizing:border-box;border:2px solid #555555;"></div>
<svg class="r" style="left:747.24px;top:826.9px;" width="54.04" height="52.2" viewBox="0 0 54.04 52.2"><path d="M28.8 8 L33 8 L25.2 18.0 L33 28 L28.8 28 L21 18.0 Z" fill="#8c8c8c" stroke="#8c8c8c" stroke-width="1" stroke-linejoin="round"/><path d="M41.3 8 L45.5 8 L37.7 18.0 L45.5 28 L41.3 28 L33.5 18.0 Z" fill="#8c8c8c" stroke="#8c8c8c" stroke-width="1" stroke-linejoin="round"/></svg>
<div class="t" style="left:751.24px;top:854.94px;font-size:20px;color:#d6d6d6;">M</div>
<div class="r" style="left:800.28px;top:825.9px;width:56.04px;height:54.2px;box-sizing:border-box;border:2px solid #555555;"></div>
<svg class="r" style="left:801.28px;top:826.9px;" width="54.04" height="52.2" viewBox="0 0 54.04 52.2"><path d="M34.625 8 L39 8 L30.875 18.0 L39 28 L34.625 28 L26.5 18.0 Z" fill="#8c8c8c" stroke="#8c8c8c" stroke-width="1" stroke-linejoin="round"/></svg>
<div class="t" style="left:805.28px;top:854.94px;font-size:20px;color:#d6d6d6;">,</div>
<div class="r" style="left:854.32px;top:825.9px;width:56.04px;height:54.2px;box-sizing:border-box;border:2px solid #555555;"></div>
<svg class="r" style="left:855.3199999999999px;top:826.9px;" width="54.04" height="52.2" viewBox="0 0 54.04 52.2"><path d="M30.875 8 L26.5 8 L34.625 18.0 L26.5 28 L30.875 28 L39 18.0 Z" fill="#8c8c8c" stroke="#8c8c8c" stroke-width="1" stroke-linejoin="round"/></svg>
<div class="t" style="left:859.32px;top:854.94px;font-size:20px;color:#d6d6d6;">.</div>
<div class="r" style="left:908.36px;top:825.9px;width:56.04px;height:54.2px;box-sizing:border-box;border:2px solid #555555;"></div>
<svg class="r" style="left:909.36px;top:826.9px;" width="54.04" height="52.2" viewBox="0 0 54.04 52.2"><path d="M25.2 8 L21 8 L28.8 18.0 L21 28 L25.2 28 L33 18.0 Z" fill="#8c8c8c" stroke="#8c8c8c" stroke-width="1" stroke-linejoin="round"/><path d="M37.7 8 L33.5 8 L41.3 18.0 L33.5 28 L37.7 28 L45.5 18.0 Z" fill="#8c8c8c" stroke="#8c8c8c" stroke-width="1" stroke-linejoin="round"/></svg>
<div class="t" style="left:913.36px;top:854.94px;font-size:20px;color:#d6d6d6;">/</div>
<div class="r" style="left:962.4px;top:825.9px;width:151.6px;height:54.2px;box-sizing:border-box;border:2px solid #555555;"></div>
<div class="r" style="left:299.5px;top:878.1px;width:84.5px;height:53.5px;box-sizing:border-box;border:2px solid #555555;"></div>
<div class="r" style="left:382px;top:878.1px;width:70px;height:53.5px;box-sizing:border-box;border:2px solid #555555;"></div>
<div class="r" style="left:450px;top:878.1px;width:84px;height:53.5px;box-sizing:border-box;border:2px solid #555555;"></div>
<div class="r" style="left:532px;top:878.1px;width:350.4px;height:53.5px;box-sizing:border-box;border:2px solid #555555;"></div>
<div class="r" style="left:880.4px;top:878.1px;width:84.0px;height:53.5px;box-sizing:border-box;border:2px solid #555555;"></div>
<div class="r" style="left:962.4px;top:878.1px;width:70.1px;height:53.5px;box-sizing:border-box;border:2px solid #555555;"></div>
<div class="r" style="left:1030.5px;top:878.1px;width:83.5px;height:53.5px;box-sizing:border-box;border:2px solid #555555;"></div>
<svg class="r" style="left:700px;top:884px;" width="28" height="26" viewBox="0 0 28 26"><path d="M4 3 L24 13.0 L4 23 Z" fill="#8c8c8c" stroke="#8c8c8c" stroke-width="1.5" stroke-linejoin="round"/></svg>
<div class="r" style="left:1136px;top:670.1px;width:56px;height:53.9px;box-sizing:border-box;border:2px solid #555555;"></div>
<div class="r" style="left:1190px;top:670.1px;width:56px;height:53.9px;box-sizing:border-box;border:2px solid #555555;"></div>
<div class="t" style="left:1194.80px;top:699.14px;font-size:20px;color:#d6d6d6;">Hom</div>
<div class="r" style="left:1244px;top:670.1px;width:56px;height:53.9px;box-sizing:border-box;border:2px solid #555555;"></div>
<div class="t" style="left:1248.80px;top:699.14px;font-size:20px;color:#d6d6d6;">PUp</div>
<div class="r" style="left:1136px;top:722.0px;width:56px;height:53.9px;box-sizing:border-box;border:2px solid #555555;"></div>
<div class="r" style="left:1190px;top:722.0px;width:56px;height:53.9px;box-sizing:border-box;border:2px solid #555555;"></div>
<div class="t" style="left:1194.80px;top:751.04px;font-size:20px;color:#d6d6d6;">End</div>
<div class="r" style="left:1244px;top:722.0px;width:56px;height:53.9px;box-sizing:border-box;border:2px solid #555555;"></div>
<div class="t" style="left:1248.80px;top:751.04px;font-size:20px;color:#d6d6d6;">PDn</div>
<svg class="r" style="left:1191px;top:671.1px;" width="54" height="52" viewBox="0 0 54 52"><rect x="21.3" y="6" width="4.300000000000001" height="23.5" rx="2" fill="#8c8c8c"/><rect x="28.7" y="6" width="4.300000000000001" height="23.5" rx="2" fill="#8c8c8c"/><rect x="28.7" y="25.5" width="16.3" height="4.0" rx="2" fill="#8c8c8c"/></svg>
<svg class="r" style="left:1191px;top:723.0px;" width="54" height="52" viewBox="0 0 54 52"><rect x="21.3" y="23.8" width="16.3" height="4.0" rx="2" fill="#8c8c8c"/><rect x="35.5" y="7" width="4.299999999999997" height="20.8" rx="2" fill="#8c8c8c"/><rect x="41.8" y="7" width="4.0" height="20.8" rx="2" fill="#8c8c8c"/></svg>
<div class="r" style="left:1190px;top:825.9px;width:56px;height:54.2px;box-sizing:border-box;border:2px solid #555555;"></div>
<svg class="r" style="left:1191px;top:826.9px;" width="54" height="52" viewBox="0 0 54 52"><path d="M32 4 L37.5 12 L26.5 12 Z" fill="#8c8c8c"/><rect x="20.5" y="15.5" width="23.0" height="17.0" rx="1.5" fill="none" stroke="#8c8c8c" stroke-width="2"/><path d="M19.5 19.5 H44.5 M19.5 28.5 H44.5" stroke="#8c8c8c" stroke-width="2"/><rect x="21.10" y="16.6" width="1.8" height="1.8" fill="#8c8c8c"/><rect x="21.10" y="29.6" width="1.8" height="1.8" fill="#8c8c8c"/><rect x="24.43" y="16.6" width="1.8" height="1.8" fill="#8c8c8c"/><rect x="24.43" y="29.6" width="1.8" height="1.8" fill="#8c8c8c"/><rect x="27.77" y="16.6" width="1.8" height="1.8" fill="#8c8c8c"/><rect x="27.77" y="29.6" width="1.8" height="1.8" fill="#8c8c8c"/><rect x="31.10" y="16.6" width="1.8" height="1.8" fill="#8c8c8c"/><rect x="31.10" y="29.6" width="1.8" height="1.8" fill="#8c8c8c"/><rect x="34.43" y="16.6" width="1.8" height="1.8" fill="#8c8c8c"/><rect x="34.43" y="29.6" width="1.8" height="1.8" fill="#8c8c8c"/><rect x="37.77" y="16.6" width="1.8" height="1.8" fill="#8c8c8c"/><rect x="37.77" y="29.6" width="1.8" height="1.8" fill="#8c8c8c"/><rect x="41.10" y="16.6" width="1.8" height="1.8" fill="#8c8c8c"/><rect x="41.10" y="29.6" width="1.8" height="1.8" fill="#8c8c8c"/></svg>
<div class="r" style="left:1136px;top:878.1px;width:56px;height:53.5px;box-sizing:border-box;border:2px solid #555555;"></div>
<div class="r" style="left:1190px;top:878.1px;width:56px;height:53.5px;box-sizing:border-box;border:2px solid #555555;"></div>
<div class="r" style="left:1244px;top:878.1px;width:56px;height:53.5px;box-sizing:border-box;border:2px solid #555555;"></div>
<svg class="r" style="left:1137px;top:879.1px;" width="54" height="52" viewBox="0 0 54 52"><path d="M37.5 10 L21 18.0 L37.5 26 Z" fill="#8c8c8c" stroke="#8c8c8c" stroke-width="1.5" stroke-linejoin="round"/><rect x="40" y="9.5" width="4.5" height="17.0" rx="2" fill="#8c8c8c"/></svg>
<svg class="r" style="left:1191px;top:879.1px;" width="54" height="52" viewBox="0 0 54 52"><rect x="20.5" y="4" width="23.0" height="17" rx="1.5" fill="none" stroke="#8c8c8c" stroke-width="2"/><path d="M19.5 8 H44.5 M19.5 17 H44.5" stroke="#8c8c8c" stroke-width="2"/><rect x="21.10" y="5.1" width="1.8" height="1.8" fill="#8c8c8c"/><rect x="21.10" y="18.1" width="1.8" height="1.8" fill="#8c8c8c"/><rect x="24.43" y="5.1" width="1.8" height="1.8" fill="#8c8c8c"/><rect x="24.43" y="18.1" width="1.8" height="1.8" fill="#8c8c8c"/><rect x="27.77" y="5.1" width="1.8" height="1.8" fill="#8c8c8c"/><rect x="27.77" y="18.1" width="1.8" height="1.8" fill="#8c8c8c"/><rect x="31.10" y="5.1" width="1.8" height="1.8" fill="#8c8c8c"/><rect x="31.10" y="18.1" width="1.8" height="1.8" fill="#8c8c8c"/><rect x="34.43" y="5.1" width="1.8" height="1.8" fill="#8c8c8c"/><rect x="34.43" y="18.1" width="1.8" height="1.8" fill="#8c8c8c"/><rect x="37.77" y="5.1" width="1.8" height="1.8" fill="#8c8c8c"/><rect x="37.77" y="18.1" width="1.8" height="1.8" fill="#8c8c8c"/><rect x="41.10" y="5.1" width="1.8" height="1.8" fill="#8c8c8c"/><rect x="41.10" y="18.1" width="1.8" height="1.8" fill="#8c8c8c"/><path d="M26.5 24 L37.5 24 L32 32.5 Z" fill="#8c8c8c"/></svg>
<svg class="r" style="left:1245px;top:879.1px;" width="54" height="52" viewBox="0 0 54 52"><rect x="20.5" y="9.5" width="4.5" height="17.0" rx="2" fill="#8c8c8c"/><path d="M27.5 10 L44.5 18.0 L27.5 26 Z" fill="#8c8c8c" stroke="#8c8c8c" stroke-width="1.5" stroke-linejoin="round"/></svg>
</div></body></html>
